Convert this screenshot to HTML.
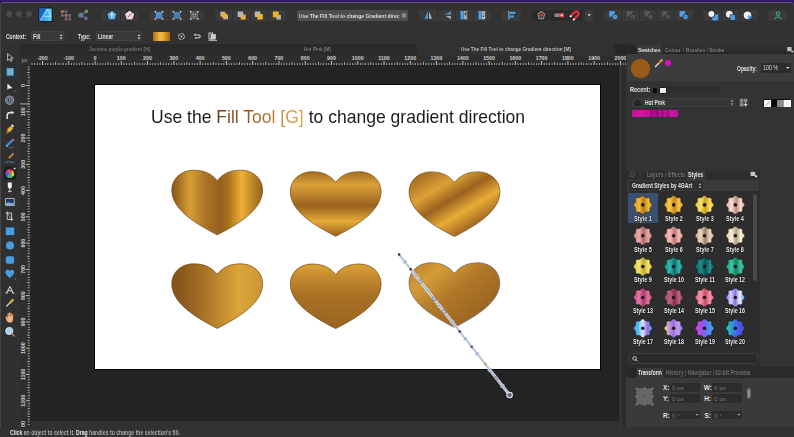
<!DOCTYPE html>
<html><head><meta charset="utf-8"><style>
*{margin:0;padding:0;box-sizing:border-box}
html,body{width:794px;height:437px;overflow:hidden;background:#2e2e2e;font-family:"Liberation Sans",sans-serif}
.a{position:absolute}
.t{position:absolute;white-space:nowrap;line-height:1}
.grp{position:absolute;top:10px;height:11px;background:#3b3b3b;border-radius:2px}
.b{font-weight:bold}
.t{text-shadow:0 0 0.7px rgba(0,0,0,0.9)}
</style></head><body>
<div class="a" style="left:0;top:0;width:794px;height:437px;background:#323232"></div>
<div class="a" style="left:0;top:0;width:794px;height:12px;background:#34186a"></div>
<div class="a" style="left:0;top:1.6px;width:794px;height:20px;background:#323232;border-radius:4px 4px 0 0;border-top:1px solid #5e5478;border-left:1.3px solid #464646"></div>
<div class="a" style="left:6.1000000000000005px;top:10.5px;width:6.4px;height:6.4px;border-radius:50%;background:#4c4c4c"></div>
<div class="a" style="left:15.8px;top:10.5px;width:6.4px;height:6.4px;border-radius:50%;background:#4c4c4c"></div>
<div class="a" style="left:25.5px;top:10.5px;width:6.4px;height:6.4px;border-radius:50%;background:#4c4c4c"></div>
<div class="a" style="left:0;top:12px;width:1.3px;height:425px;background:#464646"></div>
<div class="a" style="left:20px;top:43.6px;width:596px;height:11.1px;background:#2a2a2a"></div>
<div class="a" style="left:416.9px;top:43.6px;width:197.6px;height:11.1px;background:#313131"></div>
<div class="a" style="left:614.5px;top:43.6px;width:12.5px;height:11.1px;background:#272727"></div>
<div class="a" style="left:20px;top:54.8px;width:606px;height:10.2px;background:#2e2e2e"></div>
<div class="a" style="left:1.3px;top:43.6px;width:18.7px;height:384px;background:#303030"></div>
<div class="a" style="left:20px;top:65px;width:11px;height:362.8px;background:#2e2e2e"></div>
<div class="a" style="left:31px;top:65px;width:587.9px;height:355.6px;background:#232323"></div>
<div class="a" style="left:618.9px;top:65px;width:3.1px;height:362.8px;background:#333"></div>
<div class="a" style="left:622px;top:65px;width:3.7px;height:362.8px;background:#2c2c2c"></div>
<div class="a" style="left:94.8px;top:85.1px;width:505.5px;height:283.6px;background:#fff;box-shadow:0 0 0 0.9px #000"></div>
<div class="a" style="left:31px;top:420.6px;width:587.9px;height:7.2px;background:#313131"></div>
<div class="a" style="left:0;top:427.8px;width:794px;height:9.2px;background:#323232"></div>
<div class="a" style="left:625.7px;top:54.8px;width:168.3px;height:373px;background:#333"></div>
<svg class="a" style="left:38px;top:7px" width="15" height="15" viewBox="0 0 15 15" ><defs><linearGradient id="lg" x1="0" y1="0" x2="1" y2="0"><stop offset="0" stop-color="#2a90e0"/><stop offset="1" stop-color="#62d0f8"/></linearGradient></defs><rect x="0.3" y="0.6" width="14.4" height="14.4" rx="1.6" fill="#0e1620"/><rect x="1.3" y="1.6" width="12.4" height="12.4" rx="0.8" fill="url(#lg)"/><path d="M1.3 1.6 H8.6 L1.3 13.6Z" fill="#1e64b8"/><path d="M2 13.6 L9.2 2.2 M9.2 2.2 L13 9.4 M5.6 9.4 H13" stroke="#e6f6ff" stroke-width="0.6" fill="none" opacity="0.9"/></svg>
<svg class="a" style="left:60px;top:9px" width="12" height="13" viewBox="0 0 12 13" ><rect x="0.9" y="1.2" width="2.8" height="2.8" rx="0.4" fill="#b07a56"/><rect x="4.6" y="1.2" width="2.8" height="2.8" rx="0.4" fill="#6a6a86"/><rect x="0.9" y="4.9" width="2.8" height="2.8" rx="0.4" fill="#6a6a86"/><rect x="4.6" y="4.9" width="2.8" height="2.8" rx="0.4" fill="#b07a56"/><rect x="8.3" y="4.9" width="2.8" height="2.8" rx="0.4" fill="#6a6a86"/><rect x="4.6" y="8.6" width="2.8" height="2.8" rx="0.4" fill="#6a6a86"/><rect x="8.3" y="8.6" width="2.8" height="2.8" rx="0.4" fill="#8a5a56"/></svg>
<svg class="a" style="left:76px;top:9px" width="13" height="13" viewBox="0 0 13 13" ><path d="M4.9 6 L10.4 2.4 M4.9 6 L10 9.4" stroke="#5a6a7a" stroke-width="1.2"/><circle cx="4.9" cy="6" r="2.6" fill="#5a7f9c"/><circle cx="10.4" cy="2.4" r="1.9" fill="#6f8f5a"/><circle cx="10" cy="9.4" r="1.8" fill="#6a6a8e"/></svg>
<div class="a" style="left:102.2px;top:10px;width:36.0px;height:10.6px;background:#3a3a3a;border-radius:1.5px"></div><div class="a" style="left:119.90px;top:10px;width:0.6px;height:10.6px;background:#2f2f2f"></div>
<svg class="a" style="left:100px;top:6px" width="40" height="18" viewBox="0 0 40 18" ><circle cx="11.9" cy="9.3" r="5.2" fill="#1d2430"/><path d="M11.9,5.9 L15.3,8.4 L14.0,12.4 L9.8,12.4 L8.5,8.4Z" fill="#5aa7de" stroke="#5aa7de" stroke-width="2.2" stroke-linejoin="round"/><path d="M11.9 12 V7.6 M10.2 9.2 L11.9 7.3 L13.6 9.2" stroke="#fff" stroke-width="1" fill="none"/><circle cx="29.6" cy="9.3" r="5.2" fill="#1d2430"/><path d="M29.6,5.9 L33.0,8.4 L31.7,12.4 L27.5,12.4 L26.2,8.4Z" fill="#e8d8dc" stroke="#e8d8dc" stroke-width="2.2" stroke-linejoin="round"/><path d="M27.5 11.5 L31.8 7.2" stroke="#d8504a" stroke-width="1"/></svg>
<div class="a" style="left:150px;top:10px;width:54.0px;height:10.6px;background:#3a3a3a;border-radius:1.5px"></div><div class="a" style="left:167.70px;top:10px;width:0.6px;height:10.6px;background:#2f2f2f"></div><div class="a" style="left:185.70px;top:10px;width:0.6px;height:10.6px;background:#2f2f2f"></div>
<svg class="a" style="left:150px;top:6px" width="54" height="18" viewBox="0 0 54 18" ><rect x="5.7" y="6.000000000000001" width="6.6" height="6.6" fill="#4f8ec8"/><rect x="4.7" y="5.0" width="1.4" height="1.4" fill="#e8e8e8"/><rect x="4.7" y="12.2" width="1.4" height="1.4" fill="#e8e8e8"/><rect x="11.9" y="5.0" width="1.4" height="1.4" fill="#e8e8e8"/><rect x="11.9" y="12.2" width="1.4" height="1.4" fill="#e8e8e8"/><rect x="23.7" y="6.000000000000001" width="6.6" height="6.6" fill="#4a7fb0"/><rect x="22.7" y="5.0" width="1.4" height="1.4" fill="#e8e8e8"/><rect x="22.7" y="12.2" width="1.4" height="1.4" fill="#e8e8e8"/><rect x="29.9" y="5.0" width="1.4" height="1.4" fill="#e8e8e8"/><rect x="29.9" y="12.2" width="1.4" height="1.4" fill="#e8e8e8"/><rect x="41.0" y="6.000000000000001" width="6.6" height="6.6" fill="#555" stroke="#888" stroke-width="0.6"/><circle cx="43.099999999999994" cy="8.5" r="0.8" fill="#bbb"/><circle cx="45.5" cy="8.5" r="0.8" fill="#bbb"/><path d="M42.8 10.8 H45.8" stroke="#bbb" stroke-width="0.7"/><rect x="40.0" y="5.0" width="1.4" height="1.4" fill="#e8e8e8"/><rect x="40.0" y="12.2" width="1.4" height="1.4" fill="#e8e8e8"/><rect x="47.2" y="5.0" width="1.4" height="1.4" fill="#e8e8e8"/><rect x="47.2" y="12.2" width="1.4" height="1.4" fill="#e8e8e8"/></svg>
<div class="a" style="left:215px;top:10px;width:70.5px;height:10.6px;background:#3a3a3a;border-radius:1.5px"></div><div class="a" style="left:232.32px;top:10px;width:0.6px;height:10.6px;background:#2f2f2f"></div><div class="a" style="left:249.95px;top:10px;width:0.6px;height:10.6px;background:#2f2f2f"></div><div class="a" style="left:267.57px;top:10px;width:0.6px;height:10.6px;background:#2f2f2f"></div>
<svg class="a" style="left:214px;top:6px" width="72" height="18" viewBox="0 0 72 18" ><rect x="6.3999999999999995" y="5.7" width="4.6" height="4.6" fill="#b8b8b8"/><rect x="9.399999999999999" y="8.7" width="4.6" height="4.6" fill="#b8b8b8"/><rect x="7.6" y="6.9" width="5.2" height="5.2" fill="#f0b030" transform="rotate(45 10.2 9.5)"/><rect x="23.7" y="5.5" width="5.5" height="5.5" fill="#b8b8b8"/><path d="M29.2 8.5 h2.5 v5 h-5 v-2.5 h2.5z" fill="#f0b030"/><rect x="40.8" y="5.5" width="5.5" height="5.5" fill="#b8b8b8"/><rect x="43.3" y="8.0" width="5.5" height="5.5" fill="#f0b030"/><rect x="62.4" y="9.0" width="4.5" height="4.5" fill="#b8b8b8"/><rect x="58.9" y="5.5" width="5.8" height="5.8" fill="#f0b030"/></svg>
<div class="a" style="left:297.4px;top:10.1px;width:110.3px;height:10.7px;background:#4e4e4e;border-radius:2px"></div>
<div class="t" style="left:299.00px;top:12.62px;font-size:6.25px;color:#f0f0f0;font-weight:bold;transform:scaleX(0.805);transform-origin:0 0">Use The Fill Tool to change Gradient direc</div>
<div class="a" style="left:401.8px;top:13.2px;width:4.4px;height:4.4px;border-radius:50%;background:#8a8a8a"></div>
<div class="a" style="left:418.8px;top:10px;width:72.2px;height:10.6px;background:#3a3a3a;border-radius:1.5px"></div><div class="a" style="left:436.55px;top:10px;width:0.6px;height:10.6px;background:#2f2f2f"></div><div class="a" style="left:454.60px;top:10px;width:0.6px;height:10.6px;background:#2f2f2f"></div><div class="a" style="left:472.65px;top:10px;width:0.6px;height:10.6px;background:#2f2f2f"></div>
<svg class="a" style="left:418px;top:6px" width="74" height="18" viewBox="0 0 74 18" ><path d="M6.7 12.8 L9.9 5.2 V12.8Z" fill="#4fa0e6"/><path d="M11 5.2 L14.2 12.8 H11Z" fill="#aaa"/><path d="M25 9.3 L33 5.4 V8.6 H27.5Z" fill="#4fa0e6"/><path d="M27.5 10 H33 V13.2Z" fill="#aaa"/><rect x="42.5" y="5" width="3.2" height="8.4" fill="#4fa0e6"/><rect x="46" y="5" width="3.2" height="8.4" fill="#aaa"/><path d="M46.2 7.6 q1.4 -1.6 2.8 0" stroke="#222" stroke-width="0.8" fill="none"/><circle cx="47.6" cy="8.8" r="0.7" fill="#111"/><rect x="60.5" y="5" width="3.2" height="8.4" fill="#4fa0e6"/><rect x="64" y="5" width="3.2" height="8.4" fill="#aaa"/><path d="M64.2 11 q1.4 1.6 2.8 0" stroke="#fff" stroke-width="0.8" fill="none"/><circle cx="65.4" cy="10.4" r="0.6" fill="#111"/></svg>
<div class="a" style="left:502px;top:10px;width:18.6px;height:10.6px;background:#3a3a3a;border-radius:1.5px"></div>
<svg class="a" style="left:502px;top:6px" width="19" height="18" viewBox="0 0 19 18" ><rect x="6.2" y="5" width="1.3" height="8.4" fill="#7ab"/><rect x="7.8" y="5.8" width="5.5" height="2.2" fill="#4fa0e6"/><rect x="7.8" y="9.4" width="4" height="2.2" fill="#4fa0e6"/></svg>
<div class="a" style="left:532px;top:10px;width:51.3px;height:10.6px;background:#2a2a2a;border-radius:1.5px"></div><div class="a" style="left:548.80px;top:10px;width:0.6px;height:10.6px;background:#2f2f2f"></div><div class="a" style="left:565.90px;top:10px;width:0.6px;height:10.6px;background:#2f2f2f"></div>
<div class="a" style="left:585.2px;top:10px;width:7.4px;height:10.6px;background:#3c3c3c;border-radius:1.5px"></div>
<svg class="a" style="left:532px;top:6px" width="62" height="18" viewBox="0 0 62 18" ><path d="M6 8 L9.3 5.5 L12.6 8 L11.4 12.5 L7.2 12.5 Z" fill="none" stroke="#8a8a8a" stroke-width="1.3"/><circle cx="9.3" cy="9.2" r="1.6" fill="#d03a3a"/><rect x="22.5" y="7.5" width="9.5" height="3.6" rx="0.6" fill="#8a8a8a"/><rect x="27.2" y="7.2" width="5" height="4.2" rx="0.6" fill="#e0383a"/><circle cx="29.7" cy="9.3" r="1" fill="#fff"/><path d="M38.5 12 L41.3 9.2 A2.2 2.2 0 0 1 44.4 12.3 L41.6 15.1" stroke="none" fill="none"/><path d="M38.6 11.6 L42.6 7.6 A2.3 2.3 0 0 1 45.9 10.9 L41.9 14.9" stroke="#e0303a" stroke-width="2.2" fill="none" transform="translate(0 -1.5)"/><rect x="37.7" y="9.3" width="1.8" height="1.8" fill="#fff" transform="rotate(45 38.6 10.2)"/><rect x="41" y="12.6" width="1.8" height="1.8" fill="#fff" transform="rotate(45 41.9 13.5)"/><path d="M55.6 8.3 H58.6 L57.1 10.2Z" fill="#eee"/></svg>
<div class="a" style="left:603.5px;top:10px;width:89.1px;height:10.6px;background:#3a3a3a;border-radius:1.5px"></div><div class="a" style="left:621.02px;top:10px;width:0.6px;height:10.6px;background:#2f2f2f"></div><div class="a" style="left:638.84px;top:10px;width:0.6px;height:10.6px;background:#2f2f2f"></div><div class="a" style="left:656.66px;top:10px;width:0.6px;height:10.6px;background:#2f2f2f"></div><div class="a" style="left:674.48px;top:10px;width:0.6px;height:10.6px;background:#2f2f2f"></div>
<svg class="a" style="left:603px;top:6px" width="90" height="18" viewBox="0 0 90 18" ><rect x="6.199999999999999" y="5.1000000000000005" width="5.6" height="5.6" fill="#4fa0e6"/><circle cx="12.1" cy="11.0" r="2.8" fill="#4fa0e6" stroke="#2a2a2a" stroke-width="0.8"/><circle cx="12.1" cy="11.0" r="1" fill="#3a80c8"/><rect x="23.8" y="5.1000000000000005" width="5.6" height="5.6" fill="#575757"/><circle cx="29.7" cy="11.0" r="2.8" fill="#575757" stroke="#2a2a2a" stroke-width="0.8"/><circle cx="29.7" cy="11.0" r="1" fill="#444"/><rect x="41.7" y="5.1000000000000005" width="5.6" height="5.6" fill="#575757"/><circle cx="47.6" cy="11.0" r="2.8" fill="#575757" stroke="#2a2a2a" stroke-width="0.8"/><circle cx="47.6" cy="11.0" r="1" fill="#444"/><rect x="59" y="5.1000000000000005" width="5.6" height="5.6" fill="#575757"/><circle cx="64.9" cy="11.0" r="2.8" fill="#575757" stroke="#2a2a2a" stroke-width="0.8"/><circle cx="64.9" cy="11.0" r="1" fill="#444"/><rect x="76.6" y="5.1000000000000005" width="5.6" height="5.6" fill="#4fa0e6"/><circle cx="82.5" cy="11.0" r="2.8" fill="#4fa0e6" stroke="#2a2a2a" stroke-width="0.8"/><circle cx="82.5" cy="11.0" r="1" fill="#3a80c8"/></svg>
<div class="a" style="left:703px;top:10px;width:54.4px;height:10.6px;background:#3a3a3a;border-radius:1.5px"></div><div class="a" style="left:720.83px;top:10px;width:0.6px;height:10.6px;background:#2f2f2f"></div><div class="a" style="left:738.97px;top:10px;width:0.6px;height:10.6px;background:#2f2f2f"></div>
<svg class="a" style="left:703px;top:6px" width="55" height="18" viewBox="0 0 55 18" ><rect x="9.2" y="8.4" width="6" height="6" fill="#4fa0e6"/><circle cx="8.4" cy="8" r="3.6" fill="#f2f2f2" stroke="#111" stroke-width="0.8"/><circle cx="26.3" cy="8.3" r="4" fill="#f2f2f2" stroke="#111" stroke-width="0.8"/><rect x="27" y="8.8" width="5.6" height="5.5" fill="#4fa0e6" stroke="#1a1a1a" stroke-width="0.6"/><circle cx="44.5" cy="9.3" r="4.3" fill="#f2f2f2" stroke="#111" stroke-width="0.8"/><path d="M44.8 9.6 H48.8 A4.3 4.3 0 0 1 44.8 13.6Z" fill="#4fa0e6"/></svg>
<div class="a" style="left:768px;top:10px;width:19.3px;height:10.6px;background:#3a3a3a;border-radius:1.5px"></div>
<svg class="a" style="left:768px;top:6px" width="20" height="18" viewBox="0 0 20 18" ><circle cx="10" cy="7.6" r="1.7" fill="none" stroke="#3fa06a" stroke-width="1.3"/><path d="M6.3 13.2 Q10 8.6 13.7 13.2" stroke="#3fa06a" stroke-width="1.3" fill="none"/></svg>
<div class="t" style="left:5.80px;top:34.16px;font-size:6.83px;color:#eeeeee;font-weight:bold;transform:scaleX(0.729);transform-origin:0 0">Context:</div>
<div class="a" style="left:31px;top:31px;width:33px;height:10.4px;background:#393939;border:0.5px solid #424242;border-radius:1.5px"></div>
<div class="t" style="left:33.00px;top:34.16px;font-size:6.83px;color:#eeeeee;font-weight:bold;transform:scaleX(0.750);transform-origin:0 0">Fill</div>
<svg class="a" style="left:58px;top:32px" width="6" height="10"><path d="M1.6 4 L3 2.2 L4.4 4Z M1.6 5.6 L3 7.4 L4.4 5.6Z" fill="#ddd"/></svg>
<div class="a" style="left:69.5px;top:30px;width:0.8px;height:13px;background:#2c2c2c"></div>
<div class="t" style="left:78.30px;top:34.16px;font-size:6.83px;color:#eeeeee;font-weight:bold;transform:scaleX(0.717);transform-origin:0 0">Type:</div>
<div class="a" style="left:95.7px;top:31px;width:46.3px;height:10.4px;background:#393939;border:0.5px solid #424242;border-radius:1.5px"></div>
<div class="t" style="left:97.80px;top:34.16px;font-size:6.83px;color:#eeeeee;font-weight:bold;transform:scaleX(0.741);transform-origin:0 0">Linear</div>
<svg class="a" style="left:136px;top:31.5px" width="6" height="10"><path d="M1.6 4 L3 2.2 L4.4 4Z M1.6 5.6 L3 7.4 L4.4 5.6Z" fill="#ddd"/></svg>
<div class="a" style="left:152.8px;top:31.7px;width:17px;height:9px;background:linear-gradient(90deg,#a86a1a,#e8b03a 35%,#f0b840 50%,#d0922a 75%,#a06418)"></div>
<svg class="a" style="left:174px;top:30px" width="48" height="14"><circle cx="7.4" cy="6.5" r="3" fill="none" stroke="#ddd" stroke-width="0.9" stroke-dasharray="3.5 1.2"/><circle cx="7.4" cy="6.5" r="0.9" fill="#ddd"/><path d="M20 5 H26 M20 5 L21.5 3.8 M26 5 V7.8 H21 M21 7.8 L22.2 9" stroke="#ddd" stroke-width="0.9" fill="none"/><rect x="35" y="3" width="3.6" height="6" fill="none" stroke="#ddd" stroke-width="0.9"/><rect x="37" y="4.5" width="4.5" height="4.5" fill="#ccc" stroke="#ddd" stroke-width="0.6"/><path d="M34.5 10.3 H43" stroke="#ddd" stroke-width="0.9"/></svg>
<div class="a" style="left:627px;top:43.6px;width:167px;height:10.7px;background:linear-gradient(#323232,#2a2a2a 80%,#262626)"></div>
<div class="a" style="left:628px;top:44.5px;width:8px;height:9.6px;background:#262626"></div>
<div class="a" style="left:636.6px;top:44.5px;width:25.7px;height:9.6px;background:#3a3a3a"></div>
<div class="t" style="left:638.20px;top:46.62px;font-size:6.25px;color:#f0f0f0;font-weight:bold;transform:scaleX(0.780);transform-origin:0 0">Swatches</div>
<div class="t" style="left:665.30px;top:46.62px;font-size:6.25px;color:#8a8a8a;font-weight:bold;transform:scaleX(0.780);transform-origin:0 0">Colour</div>
<div class="a" style="left:683.1px;top:46.8px;width:0.5px;height:5.4px;background:#4c4c4c"></div>
<div class="t" style="left:685.50px;top:46.62px;font-size:6.25px;color:#8a8a8a;font-weight:bold;transform:scaleX(0.780);transform-origin:0 0">Brushes</div>
<div class="a" style="left:706.7px;top:46.8px;width:0.5px;height:5.4px;background:#4c4c4c"></div>
<div class="t" style="left:709.00px;top:46.62px;font-size:6.25px;color:#8a8a8a;font-weight:bold;transform:scaleX(0.797);transform-origin:0 0">Stroke</div>
<svg class="a" style="left:784px;top:45px" width="10" height="9"><rect x="3.2" y="2" width="4.4" height="4.2" fill="#bdbdbd"/><rect x="7.4" y="5.8" width="2" height="1.6" fill="#ddd"/></svg>
<div class="a" style="left:626.5px;top:54.3px;width:167.5px;height:26.8px;background:#3c3c3c"></div>
<div class="a" style="left:631.1px;top:58.7px;width:19px;height:19px;border-radius:50%;background:#9a5c18;box-shadow:0 0 0 0.5px #6a4418"></div>
<svg class="a" style="left:654px;top:58px" width="10" height="10"><path d="M1.5 8.5 L6 4" stroke="#e8e8e8" stroke-width="1.4" stroke-linecap="round"/><path d="M5.4 4.6 L7.8 2.2" stroke="#c89a40" stroke-width="2.4" stroke-linecap="round"/><path d="M5 3.6 L6.8 5.4" stroke="#222" stroke-width="0.8"/></svg>
<div class="a" style="left:664.8px;top:59.7px;width:6px;height:6px;border-radius:50%;background:#d812c4"></div>
<div class="t" style="left:736.70px;top:65.50px;font-size:6.40px;color:#eeeeee;font-weight:bold;transform:scaleX(0.782);transform-origin:0 0">Opacity:</div>
<div class="a" style="left:760.8px;top:62.7px;width:30px;height:9.9px;background:#2c2c2c;border-radius:1.5px"></div>
<div class="t" style="left:762.80px;top:65.27px;font-size:6.69px;color:#e8e8e8;font-weight:normal;transform:scaleX(0.791);transform-origin:0 0">100 %</div>
<svg class="a" style="left:785px;top:64px" width="6" height="8"><path d="M1 3 H4.4 L2.7 5Z" fill="#e0e0e0"/></svg>
<div class="t" style="left:629.80px;top:87.40px;font-size:6.40px;color:#eeeeee;font-weight:bold;transform:scaleX(0.870);transform-origin:0 0">Recent:</div>
<div class="a" style="left:653.2px;top:87.6px;width:4.3px;height:5.6px;background:#0a0a0a"></div>
<div class="a" style="left:658.6px;top:86.6px;width:8.8px;height:7.4px;background:#f2f2f2;border:1px solid #1a1a1a;border-radius:1px"></div>
<div class="a" style="left:668px;top:86px;width:51px;height:8px;background:#2f2f2f"></div>
<div class="a" style="left:632px;top:97.6px;width:103.7px;height:9.6px;background:#363636;border:0.5px solid #3e3e3e;border-radius:1.5px"></div>
<svg class="a" style="left:634px;top:98px" width="8" height="9"><path d="M3.8 2 L6.6 7 H1Z" fill="none" stroke="#111" stroke-width="0.9"/></svg>
<div class="t" style="left:644.80px;top:99.60px;font-size:6.40px;color:#eeeeee;font-weight:bold;transform:scaleX(0.771);transform-origin:0 0">Hot Pink</div>
<svg class="a" style="left:729px;top:98px" width="6" height="9"><path d="M1.6 3.6 L3 2 L4.4 3.6Z M1.6 5.4 L3 7 L4.4 5.4Z" fill="#ccc"/></svg>
<svg class="a" style="left:739px;top:97.5px" width="10" height="10"><rect x="0.8" y="0.8" width="3.6" height="3.6" fill="#8a8a8a"/><rect x="4.8" y="0.8" width="3.6" height="3.6" fill="#8a8a8a"/><rect x="0.8" y="4.8" width="3.6" height="3.6" fill="#8a8a8a"/><path d="M6.6 4.8 V8.6 M4.7 6.7 H8.5" stroke="#ddd" stroke-width="1"/></svg>
<div class="a" style="left:763.4px;top:99.1px;width:28px;height:8.1px;background:#111;border-radius:1.5px"></div>
<svg class="a" style="left:764px;top:99.6px" width="27" height="7.2"><rect x="0" y="0" width="7.2" height="7.2" fill="#f4f4f4"/><path d="M1.5 5.7 L5.7 1.5" stroke="#e04060" stroke-width="0.6"/><rect x="7.4" y="0" width="5.4" height="7.2" fill="#0a0a0a"/><rect x="13" y="0" width="6.4" height="7.2" fill="#8a8a8a"/><rect x="19.5" y="0" width="7.5" height="7.2" fill="#f8f8f8"/></svg>
<div class="a" style="left:632px;top:110.3px;width:45.5px;height:6.8px;background:linear-gradient(90deg,#c8109c 0,#d414a4 20%,#c0109a 38%,#9a0880 42%,#b80c96 48%,#8a0872 56%,#c010a0 60%,#a00a84 66%,#c814a2 72%,#980880 78%,#cc16a6 84%,#c010a0 100%)"></div>
<div class="a" style="left:626.4px;top:170.6px;width:133.6px;height:196px;background:#2d2d2d"></div>
<svg class="a" style="left:628px;top:170px" width="14" height="10"><circle cx="4.3" cy="4.4" r="2.4" fill="none" stroke="#555" stroke-width="1"/><circle cx="4.3" cy="4.4" r="1" fill="#444"/><path d="M12.3 2.2 V6.8" stroke="#444" stroke-width="1.6" stroke-dasharray="1 0.6"/></svg>
<div class="t" style="left:647.00px;top:172.20px;font-size:6.40px;color:#7c7c7c;font-weight:bold;transform:scaleX(0.786);transform-origin:0 0">Layers</div>
<div class="a" style="left:664.9px;top:172.6px;width:0.5px;height:5.4px;background:#4c4c4c"></div>
<div class="t" style="left:667.50px;top:172.20px;font-size:6.40px;color:#7c7c7c;font-weight:bold;transform:scaleX(0.807);transform-origin:0 0">Effects</div>
<div class="a" style="left:687px;top:170.6px;width:17.6px;height:9.6px;background:#3a3a3a"></div>
<div class="t" style="left:688.00px;top:172.20px;font-size:6.40px;color:#f2f2f2;font-weight:bold;transform:scaleX(0.807);transform-origin:0 0">Styles</div>
<svg class="a" style="left:750px;top:171px" width="10" height="9"><rect x="0.6" y="0.8" width="4.6" height="4.2" fill="#c4c4c4"/><rect x="5" y="4.4" width="2.2" height="1.8" fill="#e8e8e8"/></svg>
<div class="a" style="left:627.4px;top:180.3px;width:131.8px;height:10.3px;background:#3a3a3a"></div>
<div class="a" style="left:628.8px;top:181.2px;width:74.4px;height:9px;background:#2f2f2f;border-radius:1.5px"></div>
<div class="t" style="left:632.20px;top:183.19px;font-size:6.54px;color:#eeeeee;font-weight:bold;transform:scaleX(0.778);transform-origin:0 0">Gradient Styles by 4GArt</div>
<svg class="a" style="left:697px;top:181px" width="6" height="10"><path d="M1.6 3.8 L3 2.2 L4.4 3.8Z M1.6 5.6 L3 7.2 L4.4 5.6Z" fill="#ccc"/></svg>
<div class="a" style="left:627.8px;top:192.6px;width:30.2px;height:30px;background:#3b5070"></div>
<div class="a" style="left:753.4px;top:194px;width:3.6px;height:87px;background:#4a4a4a;border-radius:2px"></div>
<svg class="a" style="left:626px;top:190px" width="134" height="160"><defs><linearGradient id="st0" gradientUnits="userSpaceOnUse" x1="7.8" y1="0" x2="25.8" y2="0"><stop offset="0" stop-color="#d69a28"/><stop offset="0.3" stop-color="#f2bc3a"/><stop offset="0.55" stop-color="#b47818"/><stop offset="0.8" stop-color="#f2bc3a"/><stop offset="1" stop-color="#d69a28"/></linearGradient><linearGradient id="st1" gradientUnits="userSpaceOnUse" x1="38.6" y1="0" x2="56.6" y2="0"><stop offset="0" stop-color="#e2a82a"/><stop offset="0.3" stop-color="#f8c848"/><stop offset="0.55" stop-color="#c48820"/><stop offset="0.8" stop-color="#f8c848"/><stop offset="1" stop-color="#e2a82a"/></linearGradient><linearGradient id="st2" gradientUnits="userSpaceOnUse" x1="69.5" y1="0" x2="87.5" y2="0"><stop offset="0" stop-color="#e6c43a"/><stop offset="0.3" stop-color="#f8e068"/><stop offset="0.55" stop-color="#c8a020"/><stop offset="0.8" stop-color="#f8e068"/><stop offset="1" stop-color="#e6c43a"/></linearGradient><linearGradient id="st3" gradientUnits="userSpaceOnUse" x1="100.3" y1="0" x2="118.3" y2="0"><stop offset="0" stop-color="#dcaaa2"/><stop offset="0.3" stop-color="#f8dcd4"/><stop offset="0.55" stop-color="#c08880"/><stop offset="0.8" stop-color="#f8dcd4"/><stop offset="1" stop-color="#dcaaa2"/></linearGradient><linearGradient id="st4" gradientUnits="userSpaceOnUse" x1="7.8" y1="0" x2="25.8" y2="0"><stop offset="0" stop-color="#cc8484"/><stop offset="0.3" stop-color="#e8acaa"/><stop offset="0.55" stop-color="#b06868"/><stop offset="0.8" stop-color="#e8acaa"/><stop offset="1" stop-color="#cc8484"/></linearGradient><linearGradient id="st5" gradientUnits="userSpaceOnUse" x1="38.6" y1="0" x2="56.6" y2="0"><stop offset="0" stop-color="#da9896"/><stop offset="0.3" stop-color="#f2bcb6"/><stop offset="0.55" stop-color="#c07878"/><stop offset="0.8" stop-color="#f2bcb6"/><stop offset="1" stop-color="#da9896"/></linearGradient><linearGradient id="st6" gradientUnits="userSpaceOnUse" x1="69.5" y1="0" x2="87.5" y2="0"><stop offset="0" stop-color="#cca88e"/><stop offset="0.3" stop-color="#eed8c0"/><stop offset="0.55" stop-color="#a08068"/><stop offset="0.8" stop-color="#eed8c0"/><stop offset="1" stop-color="#cca88e"/></linearGradient><linearGradient id="st7" gradientUnits="userSpaceOnUse" x1="100.3" y1="0" x2="118.3" y2="0"><stop offset="0" stop-color="#dccca4"/><stop offset="0.3" stop-color="#f8f0d8"/><stop offset="0.55" stop-color="#b0a078"/><stop offset="0.8" stop-color="#f8f0d8"/><stop offset="1" stop-color="#dccca4"/></linearGradient><linearGradient id="st8" gradientUnits="userSpaceOnUse" x1="7.8" y1="0" x2="25.8" y2="0"><stop offset="0" stop-color="#dec448"/><stop offset="0.3" stop-color="#f4e478"/><stop offset="0.55" stop-color="#c4a830"/><stop offset="0.8" stop-color="#f4e478"/><stop offset="1" stop-color="#dec448"/></linearGradient><linearGradient id="st9" gradientUnits="userSpaceOnUse" x1="38.6" y1="0" x2="56.6" y2="0"><stop offset="0" stop-color="#1c9090"/><stop offset="0.3" stop-color="#34b4aa"/><stop offset="0.55" stop-color="#0e7070"/><stop offset="0.8" stop-color="#34b4aa"/><stop offset="1" stop-color="#1c9090"/></linearGradient><linearGradient id="st10" gradientUnits="userSpaceOnUse" x1="69.5" y1="0" x2="87.5" y2="0"><stop offset="0" stop-color="#0e6a6a"/><stop offset="0.3" stop-color="#1e8c88"/><stop offset="0.55" stop-color="#0a5656"/><stop offset="0.8" stop-color="#1e8c88"/><stop offset="1" stop-color="#0e6a6a"/></linearGradient><linearGradient id="st11" gradientUnits="userSpaceOnUse" x1="100.3" y1="0" x2="118.3" y2="0"><stop offset="0" stop-color="#1ea080"/><stop offset="0.3" stop-color="#44c4a2"/><stop offset="0.55" stop-color="#0e8060"/><stop offset="0.8" stop-color="#44c4a2"/><stop offset="1" stop-color="#1ea080"/></linearGradient><linearGradient id="st12" gradientUnits="userSpaceOnUse" x1="7.8" y1="0" x2="25.8" y2="0"><stop offset="0" stop-color="#c6507e"/><stop offset="0.3" stop-color="#e274a2"/><stop offset="0.55" stop-color="#a83c6a"/><stop offset="0.8" stop-color="#e274a2"/><stop offset="1" stop-color="#c6507e"/></linearGradient><linearGradient id="st13" gradientUnits="userSpaceOnUse" x1="38.6" y1="0" x2="56.6" y2="0"><stop offset="0" stop-color="#9e4666"/><stop offset="0.3" stop-color="#bc6282"/><stop offset="0.55" stop-color="#843050"/><stop offset="0.8" stop-color="#bc6282"/><stop offset="1" stop-color="#9e4666"/></linearGradient><linearGradient id="st14" gradientUnits="userSpaceOnUse" x1="69.5" y1="0" x2="87.5" y2="0"><stop offset="0" stop-color="#de6e88"/><stop offset="0.3" stop-color="#f294aa"/><stop offset="0.55" stop-color="#c84a6a"/><stop offset="0.8" stop-color="#f294aa"/><stop offset="1" stop-color="#de6e88"/></linearGradient><linearGradient id="st15" gradientUnits="userSpaceOnUse" x1="100.3" y1="0" x2="118.3" y2="0"><stop offset="0.00" stop-color="#8070f0"/><stop offset="0.25" stop-color="#d8d0ff"/><stop offset="0.50" stop-color="#8a70e8"/><stop offset="0.75" stop-color="#f0f0ff"/><stop offset="1.00" stop-color="#5a98f0"/></linearGradient><linearGradient id="st16" gradientUnits="userSpaceOnUse" x1="7.8" y1="0" x2="25.8" y2="0"><stop offset="0.00" stop-color="#7090f0"/><stop offset="0.25" stop-color="#40c8f0"/><stop offset="0.50" stop-color="#e8e0ff"/><stop offset="0.75" stop-color="#9070e8"/><stop offset="1.00" stop-color="#60a8f0"/></linearGradient><linearGradient id="st17" gradientUnits="userSpaceOnUse" x1="38.6" y1="0" x2="56.6" y2="0"><stop offset="0.00" stop-color="#f8e870"/><stop offset="0.25" stop-color="#c090e0"/><stop offset="0.50" stop-color="#9a70e0"/><stop offset="0.75" stop-color="#c8a0f0"/><stop offset="1.00" stop-color="#8a68d8"/></linearGradient><linearGradient id="st18" gradientUnits="userSpaceOnUse" x1="69.5" y1="0" x2="87.5" y2="0"><stop offset="0.00" stop-color="#d040d8"/><stop offset="0.25" stop-color="#b050e8"/><stop offset="0.50" stop-color="#8060f0"/><stop offset="0.75" stop-color="#4890f0"/><stop offset="1.00" stop-color="#40a8f0"/></linearGradient><linearGradient id="st19" gradientUnits="userSpaceOnUse" x1="100.3" y1="0" x2="118.3" y2="0"><stop offset="0.00" stop-color="#20d0b8"/><stop offset="0.25" stop-color="#30a0d0"/><stop offset="0.50" stop-color="#4070e8"/><stop offset="0.75" stop-color="#5050e8"/><stop offset="1.00" stop-color="#3a60d0"/></linearGradient></defs><path d="M16.80,5.60 L17.16,5.61 L17.53,5.66 L17.88,5.77 L18.21,6.01 L18.49,6.42 L18.74,6.83 L19.00,7.09 L19.28,7.26 L19.57,7.39 L19.86,7.51 L20.15,7.63 L20.45,7.74 L20.76,7.82 L21.14,7.82 L21.61,7.71 L22.09,7.62 L22.49,7.68 L22.82,7.85 L23.11,8.08 L23.38,8.32 L23.62,8.59 L23.85,8.88 L24.02,9.21 L24.08,9.61 L23.99,10.09 L23.88,10.56 L23.88,10.94 L23.96,11.25 L24.07,11.55 L24.19,11.84 L24.31,12.13 L24.44,12.42 L24.61,12.70 L24.87,12.96 L25.28,13.21 L25.69,13.49 L25.93,13.82 L26.04,14.17 L26.09,14.54 L26.10,14.90 L26.09,15.26 L26.04,15.63 L25.93,15.98 L25.69,16.31 L25.28,16.59 L24.87,16.84 L24.61,17.10 L24.44,17.38 L24.31,17.67 L24.19,17.96 L24.07,18.25 L23.96,18.55 L23.88,18.86 L23.88,19.24 L23.99,19.71 L24.08,20.19 L24.02,20.59 L23.85,20.92 L23.62,21.21 L23.38,21.48 L23.11,21.72 L22.82,21.95 L22.49,22.12 L22.09,22.18 L21.61,22.09 L21.14,21.98 L20.76,21.98 L20.45,22.06 L20.15,22.17 L19.86,22.29 L19.57,22.41 L19.28,22.54 L19.00,22.71 L18.74,22.97 L18.49,23.38 L18.21,23.79 L17.88,24.03 L17.53,24.14 L17.16,24.19 L16.80,24.20 L16.44,24.19 L16.07,24.14 L15.72,24.03 L15.39,23.79 L15.11,23.38 L14.86,22.97 L14.60,22.71 L14.32,22.54 L14.03,22.41 L13.74,22.29 L13.45,22.17 L13.15,22.06 L12.84,21.98 L12.46,21.98 L11.99,22.09 L11.51,22.18 L11.11,22.12 L10.78,21.95 L10.49,21.72 L10.22,21.48 L9.98,21.21 L9.75,20.92 L9.58,20.59 L9.52,20.19 L9.61,19.71 L9.72,19.24 L9.72,18.86 L9.64,18.55 L9.53,18.25 L9.41,17.96 L9.29,17.67 L9.16,17.38 L8.99,17.10 L8.73,16.84 L8.32,16.59 L7.91,16.31 L7.67,15.98 L7.56,15.63 L7.51,15.26 L7.50,14.90 L7.51,14.54 L7.56,14.17 L7.67,13.82 L7.91,13.49 L8.32,13.21 L8.73,12.96 L8.99,12.70 L9.16,12.42 L9.29,12.13 L9.41,11.84 L9.53,11.55 L9.64,11.25 L9.72,10.94 L9.72,10.56 L9.61,10.09 L9.52,9.61 L9.58,9.21 L9.75,8.88 L9.98,8.59 L10.22,8.32 L10.49,8.08 L10.78,7.85 L11.11,7.68 L11.51,7.62 L11.99,7.71 L12.46,7.82 L12.84,7.82 L13.15,7.74 L13.45,7.63 L13.74,7.51 L14.03,7.39 L14.32,7.26 L14.60,7.09 L14.86,6.83 L15.11,6.42 L15.39,6.01 L15.72,5.77 L16.07,5.66 L16.44,5.61Z" fill="url(#st0)" stroke="#141414" stroke-width="0.6" stroke-opacity="0.8"/><circle cx="16.80" cy="14.90" r="1.8" fill="#1c1c1c"/><path d="M47.65,5.60 L48.01,5.61 L48.38,5.66 L48.73,5.77 L49.06,6.01 L49.34,6.42 L49.59,6.83 L49.85,7.09 L50.13,7.26 L50.42,7.39 L50.71,7.51 L51.00,7.63 L51.30,7.74 L51.61,7.82 L51.99,7.82 L52.46,7.71 L52.94,7.62 L53.34,7.68 L53.67,7.85 L53.96,8.08 L54.23,8.32 L54.47,8.59 L54.70,8.88 L54.87,9.21 L54.93,9.61 L54.84,10.09 L54.73,10.56 L54.73,10.94 L54.81,11.25 L54.92,11.55 L55.04,11.84 L55.16,12.13 L55.29,12.42 L55.46,12.70 L55.72,12.96 L56.13,13.21 L56.54,13.49 L56.78,13.82 L56.89,14.17 L56.94,14.54 L56.95,14.90 L56.94,15.26 L56.89,15.63 L56.78,15.98 L56.54,16.31 L56.13,16.59 L55.72,16.84 L55.46,17.10 L55.29,17.38 L55.16,17.67 L55.04,17.96 L54.92,18.25 L54.81,18.55 L54.73,18.86 L54.73,19.24 L54.84,19.71 L54.93,20.19 L54.87,20.59 L54.70,20.92 L54.47,21.21 L54.23,21.48 L53.96,21.72 L53.67,21.95 L53.34,22.12 L52.94,22.18 L52.46,22.09 L51.99,21.98 L51.61,21.98 L51.30,22.06 L51.00,22.17 L50.71,22.29 L50.42,22.41 L50.13,22.54 L49.85,22.71 L49.59,22.97 L49.34,23.38 L49.06,23.79 L48.73,24.03 L48.38,24.14 L48.01,24.19 L47.65,24.20 L47.29,24.19 L46.92,24.14 L46.57,24.03 L46.24,23.79 L45.96,23.38 L45.71,22.97 L45.45,22.71 L45.17,22.54 L44.88,22.41 L44.59,22.29 L44.30,22.17 L44.00,22.06 L43.69,21.98 L43.31,21.98 L42.84,22.09 L42.36,22.18 L41.96,22.12 L41.63,21.95 L41.34,21.72 L41.07,21.48 L40.83,21.21 L40.60,20.92 L40.43,20.59 L40.37,20.19 L40.46,19.71 L40.57,19.24 L40.57,18.86 L40.49,18.55 L40.38,18.25 L40.26,17.96 L40.14,17.67 L40.01,17.38 L39.84,17.10 L39.58,16.84 L39.17,16.59 L38.76,16.31 L38.52,15.98 L38.41,15.63 L38.36,15.26 L38.35,14.90 L38.36,14.54 L38.41,14.17 L38.52,13.82 L38.76,13.49 L39.17,13.21 L39.58,12.96 L39.84,12.70 L40.01,12.42 L40.14,12.13 L40.26,11.84 L40.38,11.55 L40.49,11.25 L40.57,10.94 L40.57,10.56 L40.46,10.09 L40.37,9.61 L40.43,9.21 L40.60,8.88 L40.83,8.59 L41.07,8.32 L41.34,8.08 L41.63,7.85 L41.96,7.68 L42.36,7.62 L42.84,7.71 L43.31,7.82 L43.69,7.82 L44.00,7.74 L44.30,7.63 L44.59,7.51 L44.88,7.39 L45.17,7.26 L45.45,7.09 L45.71,6.83 L45.96,6.42 L46.24,6.01 L46.57,5.77 L46.92,5.66 L47.29,5.61Z" fill="url(#st1)" stroke="#141414" stroke-width="0.6" stroke-opacity="0.8"/><circle cx="47.65" cy="14.90" r="1.8" fill="#1c1c1c"/><path d="M78.50,5.60 L78.86,5.61 L79.23,5.66 L79.58,5.77 L79.91,6.01 L80.19,6.42 L80.44,6.83 L80.70,7.09 L80.98,7.26 L81.27,7.39 L81.56,7.51 L81.85,7.63 L82.15,7.74 L82.46,7.82 L82.84,7.82 L83.31,7.71 L83.79,7.62 L84.19,7.68 L84.52,7.85 L84.81,8.08 L85.08,8.32 L85.32,8.59 L85.55,8.88 L85.72,9.21 L85.78,9.61 L85.69,10.09 L85.58,10.56 L85.58,10.94 L85.66,11.25 L85.77,11.55 L85.89,11.84 L86.01,12.13 L86.14,12.42 L86.31,12.70 L86.57,12.96 L86.98,13.21 L87.39,13.49 L87.63,13.82 L87.74,14.17 L87.79,14.54 L87.80,14.90 L87.79,15.26 L87.74,15.63 L87.63,15.98 L87.39,16.31 L86.98,16.59 L86.57,16.84 L86.31,17.10 L86.14,17.38 L86.01,17.67 L85.89,17.96 L85.77,18.25 L85.66,18.55 L85.58,18.86 L85.58,19.24 L85.69,19.71 L85.78,20.19 L85.72,20.59 L85.55,20.92 L85.32,21.21 L85.08,21.48 L84.81,21.72 L84.52,21.95 L84.19,22.12 L83.79,22.18 L83.31,22.09 L82.84,21.98 L82.46,21.98 L82.15,22.06 L81.85,22.17 L81.56,22.29 L81.27,22.41 L80.98,22.54 L80.70,22.71 L80.44,22.97 L80.19,23.38 L79.91,23.79 L79.58,24.03 L79.23,24.14 L78.86,24.19 L78.50,24.20 L78.14,24.19 L77.77,24.14 L77.42,24.03 L77.09,23.79 L76.81,23.38 L76.56,22.97 L76.30,22.71 L76.02,22.54 L75.73,22.41 L75.44,22.29 L75.15,22.17 L74.85,22.06 L74.54,21.98 L74.16,21.98 L73.69,22.09 L73.21,22.18 L72.81,22.12 L72.48,21.95 L72.19,21.72 L71.92,21.48 L71.68,21.21 L71.45,20.92 L71.28,20.59 L71.22,20.19 L71.31,19.71 L71.42,19.24 L71.42,18.86 L71.34,18.55 L71.23,18.25 L71.11,17.96 L70.99,17.67 L70.86,17.38 L70.69,17.10 L70.43,16.84 L70.02,16.59 L69.61,16.31 L69.37,15.98 L69.26,15.63 L69.21,15.26 L69.20,14.90 L69.21,14.54 L69.26,14.17 L69.37,13.82 L69.61,13.49 L70.02,13.21 L70.43,12.96 L70.69,12.70 L70.86,12.42 L70.99,12.13 L71.11,11.84 L71.23,11.55 L71.34,11.25 L71.42,10.94 L71.42,10.56 L71.31,10.09 L71.22,9.61 L71.28,9.21 L71.45,8.88 L71.68,8.59 L71.92,8.32 L72.19,8.08 L72.48,7.85 L72.81,7.68 L73.21,7.62 L73.69,7.71 L74.16,7.82 L74.54,7.82 L74.85,7.74 L75.15,7.63 L75.44,7.51 L75.73,7.39 L76.02,7.26 L76.30,7.09 L76.56,6.83 L76.81,6.42 L77.09,6.01 L77.42,5.77 L77.77,5.66 L78.14,5.61Z" fill="url(#st2)" stroke="#141414" stroke-width="0.6" stroke-opacity="0.8"/><circle cx="78.50" cy="14.90" r="1.8" fill="#1c1c1c"/><path d="M109.35,5.60 L109.71,5.61 L110.08,5.66 L110.43,5.77 L110.76,6.01 L111.04,6.42 L111.29,6.83 L111.55,7.09 L111.83,7.26 L112.12,7.39 L112.41,7.51 L112.70,7.63 L113.00,7.74 L113.31,7.82 L113.69,7.82 L114.16,7.71 L114.64,7.62 L115.04,7.68 L115.37,7.85 L115.66,8.08 L115.93,8.32 L116.17,8.59 L116.40,8.88 L116.57,9.21 L116.63,9.61 L116.54,10.09 L116.43,10.56 L116.43,10.94 L116.51,11.25 L116.62,11.55 L116.74,11.84 L116.86,12.13 L116.99,12.42 L117.16,12.70 L117.42,12.96 L117.83,13.21 L118.24,13.49 L118.48,13.82 L118.59,14.17 L118.64,14.54 L118.65,14.90 L118.64,15.26 L118.59,15.63 L118.48,15.98 L118.24,16.31 L117.83,16.59 L117.42,16.84 L117.16,17.10 L116.99,17.38 L116.86,17.67 L116.74,17.96 L116.62,18.25 L116.51,18.55 L116.43,18.86 L116.43,19.24 L116.54,19.71 L116.63,20.19 L116.57,20.59 L116.40,20.92 L116.17,21.21 L115.93,21.48 L115.66,21.72 L115.37,21.95 L115.04,22.12 L114.64,22.18 L114.16,22.09 L113.69,21.98 L113.31,21.98 L113.00,22.06 L112.70,22.17 L112.41,22.29 L112.12,22.41 L111.83,22.54 L111.55,22.71 L111.29,22.97 L111.04,23.38 L110.76,23.79 L110.43,24.03 L110.08,24.14 L109.71,24.19 L109.35,24.20 L108.99,24.19 L108.62,24.14 L108.27,24.03 L107.94,23.79 L107.66,23.38 L107.41,22.97 L107.15,22.71 L106.87,22.54 L106.58,22.41 L106.29,22.29 L106.00,22.17 L105.70,22.06 L105.39,21.98 L105.01,21.98 L104.54,22.09 L104.06,22.18 L103.66,22.12 L103.33,21.95 L103.04,21.72 L102.77,21.48 L102.53,21.21 L102.30,20.92 L102.13,20.59 L102.07,20.19 L102.16,19.71 L102.27,19.24 L102.27,18.86 L102.19,18.55 L102.08,18.25 L101.96,17.96 L101.84,17.67 L101.71,17.38 L101.54,17.10 L101.28,16.84 L100.87,16.59 L100.46,16.31 L100.22,15.98 L100.11,15.63 L100.06,15.26 L100.05,14.90 L100.06,14.54 L100.11,14.17 L100.22,13.82 L100.46,13.49 L100.87,13.21 L101.28,12.96 L101.54,12.70 L101.71,12.42 L101.84,12.13 L101.96,11.84 L102.08,11.55 L102.19,11.25 L102.27,10.94 L102.27,10.56 L102.16,10.09 L102.07,9.61 L102.13,9.21 L102.30,8.88 L102.53,8.59 L102.77,8.32 L103.04,8.08 L103.33,7.85 L103.66,7.68 L104.06,7.62 L104.54,7.71 L105.01,7.82 L105.39,7.82 L105.70,7.74 L106.00,7.63 L106.29,7.51 L106.58,7.39 L106.87,7.26 L107.15,7.09 L107.41,6.83 L107.66,6.42 L107.94,6.01 L108.27,5.77 L108.62,5.66 L108.99,5.61Z" fill="url(#st3)" stroke="#141414" stroke-width="0.6" stroke-opacity="0.8"/><circle cx="109.35" cy="14.90" r="1.8" fill="#1c1c1c"/><path d="M16.80,36.45 L17.16,36.46 L17.53,36.51 L17.88,36.62 L18.21,36.86 L18.49,37.27 L18.74,37.68 L19.00,37.94 L19.28,38.11 L19.57,38.24 L19.86,38.36 L20.15,38.48 L20.45,38.59 L20.76,38.67 L21.14,38.67 L21.61,38.56 L22.09,38.47 L22.49,38.53 L22.82,38.70 L23.11,38.93 L23.38,39.17 L23.62,39.44 L23.85,39.73 L24.02,40.06 L24.08,40.46 L23.99,40.94 L23.88,41.41 L23.88,41.79 L23.96,42.10 L24.07,42.40 L24.19,42.69 L24.31,42.98 L24.44,43.27 L24.61,43.55 L24.87,43.81 L25.28,44.06 L25.69,44.34 L25.93,44.67 L26.04,45.02 L26.09,45.39 L26.10,45.75 L26.09,46.11 L26.04,46.48 L25.93,46.83 L25.69,47.16 L25.28,47.44 L24.87,47.69 L24.61,47.95 L24.44,48.23 L24.31,48.52 L24.19,48.81 L24.07,49.10 L23.96,49.40 L23.88,49.71 L23.88,50.09 L23.99,50.56 L24.08,51.04 L24.02,51.44 L23.85,51.77 L23.62,52.06 L23.38,52.33 L23.11,52.57 L22.82,52.80 L22.49,52.97 L22.09,53.03 L21.61,52.94 L21.14,52.83 L20.76,52.83 L20.45,52.91 L20.15,53.02 L19.86,53.14 L19.57,53.26 L19.28,53.39 L19.00,53.56 L18.74,53.82 L18.49,54.23 L18.21,54.64 L17.88,54.88 L17.53,54.99 L17.16,55.04 L16.80,55.05 L16.44,55.04 L16.07,54.99 L15.72,54.88 L15.39,54.64 L15.11,54.23 L14.86,53.82 L14.60,53.56 L14.32,53.39 L14.03,53.26 L13.74,53.14 L13.45,53.02 L13.15,52.91 L12.84,52.83 L12.46,52.83 L11.99,52.94 L11.51,53.03 L11.11,52.97 L10.78,52.80 L10.49,52.57 L10.22,52.33 L9.98,52.06 L9.75,51.77 L9.58,51.44 L9.52,51.04 L9.61,50.56 L9.72,50.09 L9.72,49.71 L9.64,49.40 L9.53,49.10 L9.41,48.81 L9.29,48.52 L9.16,48.23 L8.99,47.95 L8.73,47.69 L8.32,47.44 L7.91,47.16 L7.67,46.83 L7.56,46.48 L7.51,46.11 L7.50,45.75 L7.51,45.39 L7.56,45.02 L7.67,44.67 L7.91,44.34 L8.32,44.06 L8.73,43.81 L8.99,43.55 L9.16,43.27 L9.29,42.98 L9.41,42.69 L9.53,42.40 L9.64,42.10 L9.72,41.79 L9.72,41.41 L9.61,40.94 L9.52,40.46 L9.58,40.06 L9.75,39.73 L9.98,39.44 L10.22,39.17 L10.49,38.93 L10.78,38.70 L11.11,38.53 L11.51,38.47 L11.99,38.56 L12.46,38.67 L12.84,38.67 L13.15,38.59 L13.45,38.48 L13.74,38.36 L14.03,38.24 L14.32,38.11 L14.60,37.94 L14.86,37.68 L15.11,37.27 L15.39,36.86 L15.72,36.62 L16.07,36.51 L16.44,36.46Z" fill="url(#st4)" stroke="#141414" stroke-width="0.6" stroke-opacity="0.8"/><circle cx="16.80" cy="45.75" r="1.8" fill="#1c1c1c"/><path d="M47.65,36.45 L48.01,36.46 L48.38,36.51 L48.73,36.62 L49.06,36.86 L49.34,37.27 L49.59,37.68 L49.85,37.94 L50.13,38.11 L50.42,38.24 L50.71,38.36 L51.00,38.48 L51.30,38.59 L51.61,38.67 L51.99,38.67 L52.46,38.56 L52.94,38.47 L53.34,38.53 L53.67,38.70 L53.96,38.93 L54.23,39.17 L54.47,39.44 L54.70,39.73 L54.87,40.06 L54.93,40.46 L54.84,40.94 L54.73,41.41 L54.73,41.79 L54.81,42.10 L54.92,42.40 L55.04,42.69 L55.16,42.98 L55.29,43.27 L55.46,43.55 L55.72,43.81 L56.13,44.06 L56.54,44.34 L56.78,44.67 L56.89,45.02 L56.94,45.39 L56.95,45.75 L56.94,46.11 L56.89,46.48 L56.78,46.83 L56.54,47.16 L56.13,47.44 L55.72,47.69 L55.46,47.95 L55.29,48.23 L55.16,48.52 L55.04,48.81 L54.92,49.10 L54.81,49.40 L54.73,49.71 L54.73,50.09 L54.84,50.56 L54.93,51.04 L54.87,51.44 L54.70,51.77 L54.47,52.06 L54.23,52.33 L53.96,52.57 L53.67,52.80 L53.34,52.97 L52.94,53.03 L52.46,52.94 L51.99,52.83 L51.61,52.83 L51.30,52.91 L51.00,53.02 L50.71,53.14 L50.42,53.26 L50.13,53.39 L49.85,53.56 L49.59,53.82 L49.34,54.23 L49.06,54.64 L48.73,54.88 L48.38,54.99 L48.01,55.04 L47.65,55.05 L47.29,55.04 L46.92,54.99 L46.57,54.88 L46.24,54.64 L45.96,54.23 L45.71,53.82 L45.45,53.56 L45.17,53.39 L44.88,53.26 L44.59,53.14 L44.30,53.02 L44.00,52.91 L43.69,52.83 L43.31,52.83 L42.84,52.94 L42.36,53.03 L41.96,52.97 L41.63,52.80 L41.34,52.57 L41.07,52.33 L40.83,52.06 L40.60,51.77 L40.43,51.44 L40.37,51.04 L40.46,50.56 L40.57,50.09 L40.57,49.71 L40.49,49.40 L40.38,49.10 L40.26,48.81 L40.14,48.52 L40.01,48.23 L39.84,47.95 L39.58,47.69 L39.17,47.44 L38.76,47.16 L38.52,46.83 L38.41,46.48 L38.36,46.11 L38.35,45.75 L38.36,45.39 L38.41,45.02 L38.52,44.67 L38.76,44.34 L39.17,44.06 L39.58,43.81 L39.84,43.55 L40.01,43.27 L40.14,42.98 L40.26,42.69 L40.38,42.40 L40.49,42.10 L40.57,41.79 L40.57,41.41 L40.46,40.94 L40.37,40.46 L40.43,40.06 L40.60,39.73 L40.83,39.44 L41.07,39.17 L41.34,38.93 L41.63,38.70 L41.96,38.53 L42.36,38.47 L42.84,38.56 L43.31,38.67 L43.69,38.67 L44.00,38.59 L44.30,38.48 L44.59,38.36 L44.88,38.24 L45.17,38.11 L45.45,37.94 L45.71,37.68 L45.96,37.27 L46.24,36.86 L46.57,36.62 L46.92,36.51 L47.29,36.46Z" fill="url(#st5)" stroke="#141414" stroke-width="0.6" stroke-opacity="0.8"/><circle cx="47.65" cy="45.75" r="1.8" fill="#1c1c1c"/><path d="M78.50,36.45 L78.86,36.46 L79.23,36.51 L79.58,36.62 L79.91,36.86 L80.19,37.27 L80.44,37.68 L80.70,37.94 L80.98,38.11 L81.27,38.24 L81.56,38.36 L81.85,38.48 L82.15,38.59 L82.46,38.67 L82.84,38.67 L83.31,38.56 L83.79,38.47 L84.19,38.53 L84.52,38.70 L84.81,38.93 L85.08,39.17 L85.32,39.44 L85.55,39.73 L85.72,40.06 L85.78,40.46 L85.69,40.94 L85.58,41.41 L85.58,41.79 L85.66,42.10 L85.77,42.40 L85.89,42.69 L86.01,42.98 L86.14,43.27 L86.31,43.55 L86.57,43.81 L86.98,44.06 L87.39,44.34 L87.63,44.67 L87.74,45.02 L87.79,45.39 L87.80,45.75 L87.79,46.11 L87.74,46.48 L87.63,46.83 L87.39,47.16 L86.98,47.44 L86.57,47.69 L86.31,47.95 L86.14,48.23 L86.01,48.52 L85.89,48.81 L85.77,49.10 L85.66,49.40 L85.58,49.71 L85.58,50.09 L85.69,50.56 L85.78,51.04 L85.72,51.44 L85.55,51.77 L85.32,52.06 L85.08,52.33 L84.81,52.57 L84.52,52.80 L84.19,52.97 L83.79,53.03 L83.31,52.94 L82.84,52.83 L82.46,52.83 L82.15,52.91 L81.85,53.02 L81.56,53.14 L81.27,53.26 L80.98,53.39 L80.70,53.56 L80.44,53.82 L80.19,54.23 L79.91,54.64 L79.58,54.88 L79.23,54.99 L78.86,55.04 L78.50,55.05 L78.14,55.04 L77.77,54.99 L77.42,54.88 L77.09,54.64 L76.81,54.23 L76.56,53.82 L76.30,53.56 L76.02,53.39 L75.73,53.26 L75.44,53.14 L75.15,53.02 L74.85,52.91 L74.54,52.83 L74.16,52.83 L73.69,52.94 L73.21,53.03 L72.81,52.97 L72.48,52.80 L72.19,52.57 L71.92,52.33 L71.68,52.06 L71.45,51.77 L71.28,51.44 L71.22,51.04 L71.31,50.56 L71.42,50.09 L71.42,49.71 L71.34,49.40 L71.23,49.10 L71.11,48.81 L70.99,48.52 L70.86,48.23 L70.69,47.95 L70.43,47.69 L70.02,47.44 L69.61,47.16 L69.37,46.83 L69.26,46.48 L69.21,46.11 L69.20,45.75 L69.21,45.39 L69.26,45.02 L69.37,44.67 L69.61,44.34 L70.02,44.06 L70.43,43.81 L70.69,43.55 L70.86,43.27 L70.99,42.98 L71.11,42.69 L71.23,42.40 L71.34,42.10 L71.42,41.79 L71.42,41.41 L71.31,40.94 L71.22,40.46 L71.28,40.06 L71.45,39.73 L71.68,39.44 L71.92,39.17 L72.19,38.93 L72.48,38.70 L72.81,38.53 L73.21,38.47 L73.69,38.56 L74.16,38.67 L74.54,38.67 L74.85,38.59 L75.15,38.48 L75.44,38.36 L75.73,38.24 L76.02,38.11 L76.30,37.94 L76.56,37.68 L76.81,37.27 L77.09,36.86 L77.42,36.62 L77.77,36.51 L78.14,36.46Z" fill="url(#st6)" stroke="#141414" stroke-width="0.6" stroke-opacity="0.8"/><circle cx="78.50" cy="45.75" r="1.8" fill="#1c1c1c"/><path d="M109.35,36.45 L109.71,36.46 L110.08,36.51 L110.43,36.62 L110.76,36.86 L111.04,37.27 L111.29,37.68 L111.55,37.94 L111.83,38.11 L112.12,38.24 L112.41,38.36 L112.70,38.48 L113.00,38.59 L113.31,38.67 L113.69,38.67 L114.16,38.56 L114.64,38.47 L115.04,38.53 L115.37,38.70 L115.66,38.93 L115.93,39.17 L116.17,39.44 L116.40,39.73 L116.57,40.06 L116.63,40.46 L116.54,40.94 L116.43,41.41 L116.43,41.79 L116.51,42.10 L116.62,42.40 L116.74,42.69 L116.86,42.98 L116.99,43.27 L117.16,43.55 L117.42,43.81 L117.83,44.06 L118.24,44.34 L118.48,44.67 L118.59,45.02 L118.64,45.39 L118.65,45.75 L118.64,46.11 L118.59,46.48 L118.48,46.83 L118.24,47.16 L117.83,47.44 L117.42,47.69 L117.16,47.95 L116.99,48.23 L116.86,48.52 L116.74,48.81 L116.62,49.10 L116.51,49.40 L116.43,49.71 L116.43,50.09 L116.54,50.56 L116.63,51.04 L116.57,51.44 L116.40,51.77 L116.17,52.06 L115.93,52.33 L115.66,52.57 L115.37,52.80 L115.04,52.97 L114.64,53.03 L114.16,52.94 L113.69,52.83 L113.31,52.83 L113.00,52.91 L112.70,53.02 L112.41,53.14 L112.12,53.26 L111.83,53.39 L111.55,53.56 L111.29,53.82 L111.04,54.23 L110.76,54.64 L110.43,54.88 L110.08,54.99 L109.71,55.04 L109.35,55.05 L108.99,55.04 L108.62,54.99 L108.27,54.88 L107.94,54.64 L107.66,54.23 L107.41,53.82 L107.15,53.56 L106.87,53.39 L106.58,53.26 L106.29,53.14 L106.00,53.02 L105.70,52.91 L105.39,52.83 L105.01,52.83 L104.54,52.94 L104.06,53.03 L103.66,52.97 L103.33,52.80 L103.04,52.57 L102.77,52.33 L102.53,52.06 L102.30,51.77 L102.13,51.44 L102.07,51.04 L102.16,50.56 L102.27,50.09 L102.27,49.71 L102.19,49.40 L102.08,49.10 L101.96,48.81 L101.84,48.52 L101.71,48.23 L101.54,47.95 L101.28,47.69 L100.87,47.44 L100.46,47.16 L100.22,46.83 L100.11,46.48 L100.06,46.11 L100.05,45.75 L100.06,45.39 L100.11,45.02 L100.22,44.67 L100.46,44.34 L100.87,44.06 L101.28,43.81 L101.54,43.55 L101.71,43.27 L101.84,42.98 L101.96,42.69 L102.08,42.40 L102.19,42.10 L102.27,41.79 L102.27,41.41 L102.16,40.94 L102.07,40.46 L102.13,40.06 L102.30,39.73 L102.53,39.44 L102.77,39.17 L103.04,38.93 L103.33,38.70 L103.66,38.53 L104.06,38.47 L104.54,38.56 L105.01,38.67 L105.39,38.67 L105.70,38.59 L106.00,38.48 L106.29,38.36 L106.58,38.24 L106.87,38.11 L107.15,37.94 L107.41,37.68 L107.66,37.27 L107.94,36.86 L108.27,36.62 L108.62,36.51 L108.99,36.46Z" fill="url(#st7)" stroke="#141414" stroke-width="0.6" stroke-opacity="0.8"/><circle cx="109.35" cy="45.75" r="1.8" fill="#1c1c1c"/><path d="M16.80,67.30 L17.16,67.31 L17.53,67.36 L17.88,67.47 L18.21,67.71 L18.49,68.12 L18.74,68.53 L19.00,68.79 L19.28,68.96 L19.57,69.09 L19.86,69.21 L20.15,69.33 L20.45,69.44 L20.76,69.52 L21.14,69.52 L21.61,69.41 L22.09,69.32 L22.49,69.38 L22.82,69.55 L23.11,69.78 L23.38,70.02 L23.62,70.29 L23.85,70.58 L24.02,70.91 L24.08,71.31 L23.99,71.79 L23.88,72.26 L23.88,72.64 L23.96,72.95 L24.07,73.25 L24.19,73.54 L24.31,73.83 L24.44,74.12 L24.61,74.40 L24.87,74.66 L25.28,74.91 L25.69,75.19 L25.93,75.52 L26.04,75.87 L26.09,76.24 L26.10,76.60 L26.09,76.96 L26.04,77.33 L25.93,77.68 L25.69,78.01 L25.28,78.29 L24.87,78.54 L24.61,78.80 L24.44,79.08 L24.31,79.37 L24.19,79.66 L24.07,79.95 L23.96,80.25 L23.88,80.56 L23.88,80.94 L23.99,81.41 L24.08,81.89 L24.02,82.29 L23.85,82.62 L23.62,82.91 L23.38,83.18 L23.11,83.42 L22.82,83.65 L22.49,83.82 L22.09,83.88 L21.61,83.79 L21.14,83.68 L20.76,83.68 L20.45,83.76 L20.15,83.87 L19.86,83.99 L19.57,84.11 L19.28,84.24 L19.00,84.41 L18.74,84.67 L18.49,85.08 L18.21,85.49 L17.88,85.73 L17.53,85.84 L17.16,85.89 L16.80,85.90 L16.44,85.89 L16.07,85.84 L15.72,85.73 L15.39,85.49 L15.11,85.08 L14.86,84.67 L14.60,84.41 L14.32,84.24 L14.03,84.11 L13.74,83.99 L13.45,83.87 L13.15,83.76 L12.84,83.68 L12.46,83.68 L11.99,83.79 L11.51,83.88 L11.11,83.82 L10.78,83.65 L10.49,83.42 L10.22,83.18 L9.98,82.91 L9.75,82.62 L9.58,82.29 L9.52,81.89 L9.61,81.41 L9.72,80.94 L9.72,80.56 L9.64,80.25 L9.53,79.95 L9.41,79.66 L9.29,79.37 L9.16,79.08 L8.99,78.80 L8.73,78.54 L8.32,78.29 L7.91,78.01 L7.67,77.68 L7.56,77.33 L7.51,76.96 L7.50,76.60 L7.51,76.24 L7.56,75.87 L7.67,75.52 L7.91,75.19 L8.32,74.91 L8.73,74.66 L8.99,74.40 L9.16,74.12 L9.29,73.83 L9.41,73.54 L9.53,73.25 L9.64,72.95 L9.72,72.64 L9.72,72.26 L9.61,71.79 L9.52,71.31 L9.58,70.91 L9.75,70.58 L9.98,70.29 L10.22,70.02 L10.49,69.78 L10.78,69.55 L11.11,69.38 L11.51,69.32 L11.99,69.41 L12.46,69.52 L12.84,69.52 L13.15,69.44 L13.45,69.33 L13.74,69.21 L14.03,69.09 L14.32,68.96 L14.60,68.79 L14.86,68.53 L15.11,68.12 L15.39,67.71 L15.72,67.47 L16.07,67.36 L16.44,67.31Z" fill="url(#st8)" stroke="#141414" stroke-width="0.6" stroke-opacity="0.8"/><circle cx="16.80" cy="76.60" r="1.8" fill="#1c1c1c"/><path d="M47.65,67.30 L48.01,67.31 L48.38,67.36 L48.73,67.47 L49.06,67.71 L49.34,68.12 L49.59,68.53 L49.85,68.79 L50.13,68.96 L50.42,69.09 L50.71,69.21 L51.00,69.33 L51.30,69.44 L51.61,69.52 L51.99,69.52 L52.46,69.41 L52.94,69.32 L53.34,69.38 L53.67,69.55 L53.96,69.78 L54.23,70.02 L54.47,70.29 L54.70,70.58 L54.87,70.91 L54.93,71.31 L54.84,71.79 L54.73,72.26 L54.73,72.64 L54.81,72.95 L54.92,73.25 L55.04,73.54 L55.16,73.83 L55.29,74.12 L55.46,74.40 L55.72,74.66 L56.13,74.91 L56.54,75.19 L56.78,75.52 L56.89,75.87 L56.94,76.24 L56.95,76.60 L56.94,76.96 L56.89,77.33 L56.78,77.68 L56.54,78.01 L56.13,78.29 L55.72,78.54 L55.46,78.80 L55.29,79.08 L55.16,79.37 L55.04,79.66 L54.92,79.95 L54.81,80.25 L54.73,80.56 L54.73,80.94 L54.84,81.41 L54.93,81.89 L54.87,82.29 L54.70,82.62 L54.47,82.91 L54.23,83.18 L53.96,83.42 L53.67,83.65 L53.34,83.82 L52.94,83.88 L52.46,83.79 L51.99,83.68 L51.61,83.68 L51.30,83.76 L51.00,83.87 L50.71,83.99 L50.42,84.11 L50.13,84.24 L49.85,84.41 L49.59,84.67 L49.34,85.08 L49.06,85.49 L48.73,85.73 L48.38,85.84 L48.01,85.89 L47.65,85.90 L47.29,85.89 L46.92,85.84 L46.57,85.73 L46.24,85.49 L45.96,85.08 L45.71,84.67 L45.45,84.41 L45.17,84.24 L44.88,84.11 L44.59,83.99 L44.30,83.87 L44.00,83.76 L43.69,83.68 L43.31,83.68 L42.84,83.79 L42.36,83.88 L41.96,83.82 L41.63,83.65 L41.34,83.42 L41.07,83.18 L40.83,82.91 L40.60,82.62 L40.43,82.29 L40.37,81.89 L40.46,81.41 L40.57,80.94 L40.57,80.56 L40.49,80.25 L40.38,79.95 L40.26,79.66 L40.14,79.37 L40.01,79.08 L39.84,78.80 L39.58,78.54 L39.17,78.29 L38.76,78.01 L38.52,77.68 L38.41,77.33 L38.36,76.96 L38.35,76.60 L38.36,76.24 L38.41,75.87 L38.52,75.52 L38.76,75.19 L39.17,74.91 L39.58,74.66 L39.84,74.40 L40.01,74.12 L40.14,73.83 L40.26,73.54 L40.38,73.25 L40.49,72.95 L40.57,72.64 L40.57,72.26 L40.46,71.79 L40.37,71.31 L40.43,70.91 L40.60,70.58 L40.83,70.29 L41.07,70.02 L41.34,69.78 L41.63,69.55 L41.96,69.38 L42.36,69.32 L42.84,69.41 L43.31,69.52 L43.69,69.52 L44.00,69.44 L44.30,69.33 L44.59,69.21 L44.88,69.09 L45.17,68.96 L45.45,68.79 L45.71,68.53 L45.96,68.12 L46.24,67.71 L46.57,67.47 L46.92,67.36 L47.29,67.31Z" fill="url(#st9)" stroke="#141414" stroke-width="0.6" stroke-opacity="0.8"/><circle cx="47.65" cy="76.60" r="1.8" fill="#1c1c1c"/><path d="M78.50,67.30 L78.86,67.31 L79.23,67.36 L79.58,67.47 L79.91,67.71 L80.19,68.12 L80.44,68.53 L80.70,68.79 L80.98,68.96 L81.27,69.09 L81.56,69.21 L81.85,69.33 L82.15,69.44 L82.46,69.52 L82.84,69.52 L83.31,69.41 L83.79,69.32 L84.19,69.38 L84.52,69.55 L84.81,69.78 L85.08,70.02 L85.32,70.29 L85.55,70.58 L85.72,70.91 L85.78,71.31 L85.69,71.79 L85.58,72.26 L85.58,72.64 L85.66,72.95 L85.77,73.25 L85.89,73.54 L86.01,73.83 L86.14,74.12 L86.31,74.40 L86.57,74.66 L86.98,74.91 L87.39,75.19 L87.63,75.52 L87.74,75.87 L87.79,76.24 L87.80,76.60 L87.79,76.96 L87.74,77.33 L87.63,77.68 L87.39,78.01 L86.98,78.29 L86.57,78.54 L86.31,78.80 L86.14,79.08 L86.01,79.37 L85.89,79.66 L85.77,79.95 L85.66,80.25 L85.58,80.56 L85.58,80.94 L85.69,81.41 L85.78,81.89 L85.72,82.29 L85.55,82.62 L85.32,82.91 L85.08,83.18 L84.81,83.42 L84.52,83.65 L84.19,83.82 L83.79,83.88 L83.31,83.79 L82.84,83.68 L82.46,83.68 L82.15,83.76 L81.85,83.87 L81.56,83.99 L81.27,84.11 L80.98,84.24 L80.70,84.41 L80.44,84.67 L80.19,85.08 L79.91,85.49 L79.58,85.73 L79.23,85.84 L78.86,85.89 L78.50,85.90 L78.14,85.89 L77.77,85.84 L77.42,85.73 L77.09,85.49 L76.81,85.08 L76.56,84.67 L76.30,84.41 L76.02,84.24 L75.73,84.11 L75.44,83.99 L75.15,83.87 L74.85,83.76 L74.54,83.68 L74.16,83.68 L73.69,83.79 L73.21,83.88 L72.81,83.82 L72.48,83.65 L72.19,83.42 L71.92,83.18 L71.68,82.91 L71.45,82.62 L71.28,82.29 L71.22,81.89 L71.31,81.41 L71.42,80.94 L71.42,80.56 L71.34,80.25 L71.23,79.95 L71.11,79.66 L70.99,79.37 L70.86,79.08 L70.69,78.80 L70.43,78.54 L70.02,78.29 L69.61,78.01 L69.37,77.68 L69.26,77.33 L69.21,76.96 L69.20,76.60 L69.21,76.24 L69.26,75.87 L69.37,75.52 L69.61,75.19 L70.02,74.91 L70.43,74.66 L70.69,74.40 L70.86,74.12 L70.99,73.83 L71.11,73.54 L71.23,73.25 L71.34,72.95 L71.42,72.64 L71.42,72.26 L71.31,71.79 L71.22,71.31 L71.28,70.91 L71.45,70.58 L71.68,70.29 L71.92,70.02 L72.19,69.78 L72.48,69.55 L72.81,69.38 L73.21,69.32 L73.69,69.41 L74.16,69.52 L74.54,69.52 L74.85,69.44 L75.15,69.33 L75.44,69.21 L75.73,69.09 L76.02,68.96 L76.30,68.79 L76.56,68.53 L76.81,68.12 L77.09,67.71 L77.42,67.47 L77.77,67.36 L78.14,67.31Z" fill="url(#st10)" stroke="#141414" stroke-width="0.6" stroke-opacity="0.8"/><circle cx="78.50" cy="76.60" r="1.8" fill="#1c1c1c"/><path d="M109.35,67.30 L109.71,67.31 L110.08,67.36 L110.43,67.47 L110.76,67.71 L111.04,68.12 L111.29,68.53 L111.55,68.79 L111.83,68.96 L112.12,69.09 L112.41,69.21 L112.70,69.33 L113.00,69.44 L113.31,69.52 L113.69,69.52 L114.16,69.41 L114.64,69.32 L115.04,69.38 L115.37,69.55 L115.66,69.78 L115.93,70.02 L116.17,70.29 L116.40,70.58 L116.57,70.91 L116.63,71.31 L116.54,71.79 L116.43,72.26 L116.43,72.64 L116.51,72.95 L116.62,73.25 L116.74,73.54 L116.86,73.83 L116.99,74.12 L117.16,74.40 L117.42,74.66 L117.83,74.91 L118.24,75.19 L118.48,75.52 L118.59,75.87 L118.64,76.24 L118.65,76.60 L118.64,76.96 L118.59,77.33 L118.48,77.68 L118.24,78.01 L117.83,78.29 L117.42,78.54 L117.16,78.80 L116.99,79.08 L116.86,79.37 L116.74,79.66 L116.62,79.95 L116.51,80.25 L116.43,80.56 L116.43,80.94 L116.54,81.41 L116.63,81.89 L116.57,82.29 L116.40,82.62 L116.17,82.91 L115.93,83.18 L115.66,83.42 L115.37,83.65 L115.04,83.82 L114.64,83.88 L114.16,83.79 L113.69,83.68 L113.31,83.68 L113.00,83.76 L112.70,83.87 L112.41,83.99 L112.12,84.11 L111.83,84.24 L111.55,84.41 L111.29,84.67 L111.04,85.08 L110.76,85.49 L110.43,85.73 L110.08,85.84 L109.71,85.89 L109.35,85.90 L108.99,85.89 L108.62,85.84 L108.27,85.73 L107.94,85.49 L107.66,85.08 L107.41,84.67 L107.15,84.41 L106.87,84.24 L106.58,84.11 L106.29,83.99 L106.00,83.87 L105.70,83.76 L105.39,83.68 L105.01,83.68 L104.54,83.79 L104.06,83.88 L103.66,83.82 L103.33,83.65 L103.04,83.42 L102.77,83.18 L102.53,82.91 L102.30,82.62 L102.13,82.29 L102.07,81.89 L102.16,81.41 L102.27,80.94 L102.27,80.56 L102.19,80.25 L102.08,79.95 L101.96,79.66 L101.84,79.37 L101.71,79.08 L101.54,78.80 L101.28,78.54 L100.87,78.29 L100.46,78.01 L100.22,77.68 L100.11,77.33 L100.06,76.96 L100.05,76.60 L100.06,76.24 L100.11,75.87 L100.22,75.52 L100.46,75.19 L100.87,74.91 L101.28,74.66 L101.54,74.40 L101.71,74.12 L101.84,73.83 L101.96,73.54 L102.08,73.25 L102.19,72.95 L102.27,72.64 L102.27,72.26 L102.16,71.79 L102.07,71.31 L102.13,70.91 L102.30,70.58 L102.53,70.29 L102.77,70.02 L103.04,69.78 L103.33,69.55 L103.66,69.38 L104.06,69.32 L104.54,69.41 L105.01,69.52 L105.39,69.52 L105.70,69.44 L106.00,69.33 L106.29,69.21 L106.58,69.09 L106.87,68.96 L107.15,68.79 L107.41,68.53 L107.66,68.12 L107.94,67.71 L108.27,67.47 L108.62,67.36 L108.99,67.31Z" fill="url(#st11)" stroke="#141414" stroke-width="0.6" stroke-opacity="0.8"/><circle cx="109.35" cy="76.60" r="1.8" fill="#1c1c1c"/><path d="M16.80,98.15 L17.16,98.16 L17.53,98.21 L17.88,98.32 L18.21,98.56 L18.49,98.97 L18.74,99.38 L19.00,99.64 L19.28,99.81 L19.57,99.94 L19.86,100.06 L20.15,100.18 L20.45,100.29 L20.76,100.37 L21.14,100.37 L21.61,100.26 L22.09,100.17 L22.49,100.23 L22.82,100.40 L23.11,100.63 L23.38,100.87 L23.62,101.14 L23.85,101.43 L24.02,101.76 L24.08,102.16 L23.99,102.64 L23.88,103.11 L23.88,103.49 L23.96,103.80 L24.07,104.10 L24.19,104.39 L24.31,104.68 L24.44,104.97 L24.61,105.25 L24.87,105.51 L25.28,105.76 L25.69,106.04 L25.93,106.37 L26.04,106.72 L26.09,107.09 L26.10,107.45 L26.09,107.81 L26.04,108.18 L25.93,108.53 L25.69,108.86 L25.28,109.14 L24.87,109.39 L24.61,109.65 L24.44,109.93 L24.31,110.22 L24.19,110.51 L24.07,110.80 L23.96,111.10 L23.88,111.41 L23.88,111.79 L23.99,112.26 L24.08,112.74 L24.02,113.14 L23.85,113.47 L23.62,113.76 L23.38,114.03 L23.11,114.27 L22.82,114.50 L22.49,114.67 L22.09,114.73 L21.61,114.64 L21.14,114.53 L20.76,114.53 L20.45,114.61 L20.15,114.72 L19.86,114.84 L19.57,114.96 L19.28,115.09 L19.00,115.26 L18.74,115.52 L18.49,115.93 L18.21,116.34 L17.88,116.58 L17.53,116.69 L17.16,116.74 L16.80,116.75 L16.44,116.74 L16.07,116.69 L15.72,116.58 L15.39,116.34 L15.11,115.93 L14.86,115.52 L14.60,115.26 L14.32,115.09 L14.03,114.96 L13.74,114.84 L13.45,114.72 L13.15,114.61 L12.84,114.53 L12.46,114.53 L11.99,114.64 L11.51,114.73 L11.11,114.67 L10.78,114.50 L10.49,114.27 L10.22,114.03 L9.98,113.76 L9.75,113.47 L9.58,113.14 L9.52,112.74 L9.61,112.26 L9.72,111.79 L9.72,111.41 L9.64,111.10 L9.53,110.80 L9.41,110.51 L9.29,110.22 L9.16,109.93 L8.99,109.65 L8.73,109.39 L8.32,109.14 L7.91,108.86 L7.67,108.53 L7.56,108.18 L7.51,107.81 L7.50,107.45 L7.51,107.09 L7.56,106.72 L7.67,106.37 L7.91,106.04 L8.32,105.76 L8.73,105.51 L8.99,105.25 L9.16,104.97 L9.29,104.68 L9.41,104.39 L9.53,104.10 L9.64,103.80 L9.72,103.49 L9.72,103.11 L9.61,102.64 L9.52,102.16 L9.58,101.76 L9.75,101.43 L9.98,101.14 L10.22,100.87 L10.49,100.63 L10.78,100.40 L11.11,100.23 L11.51,100.17 L11.99,100.26 L12.46,100.37 L12.84,100.37 L13.15,100.29 L13.45,100.18 L13.74,100.06 L14.03,99.94 L14.32,99.81 L14.60,99.64 L14.86,99.38 L15.11,98.97 L15.39,98.56 L15.72,98.32 L16.07,98.21 L16.44,98.16Z" fill="url(#st12)" stroke="#141414" stroke-width="0.6" stroke-opacity="0.8"/><circle cx="16.80" cy="107.45" r="1.8" fill="#1c1c1c"/><path d="M47.65,98.15 L48.01,98.16 L48.38,98.21 L48.73,98.32 L49.06,98.56 L49.34,98.97 L49.59,99.38 L49.85,99.64 L50.13,99.81 L50.42,99.94 L50.71,100.06 L51.00,100.18 L51.30,100.29 L51.61,100.37 L51.99,100.37 L52.46,100.26 L52.94,100.17 L53.34,100.23 L53.67,100.40 L53.96,100.63 L54.23,100.87 L54.47,101.14 L54.70,101.43 L54.87,101.76 L54.93,102.16 L54.84,102.64 L54.73,103.11 L54.73,103.49 L54.81,103.80 L54.92,104.10 L55.04,104.39 L55.16,104.68 L55.29,104.97 L55.46,105.25 L55.72,105.51 L56.13,105.76 L56.54,106.04 L56.78,106.37 L56.89,106.72 L56.94,107.09 L56.95,107.45 L56.94,107.81 L56.89,108.18 L56.78,108.53 L56.54,108.86 L56.13,109.14 L55.72,109.39 L55.46,109.65 L55.29,109.93 L55.16,110.22 L55.04,110.51 L54.92,110.80 L54.81,111.10 L54.73,111.41 L54.73,111.79 L54.84,112.26 L54.93,112.74 L54.87,113.14 L54.70,113.47 L54.47,113.76 L54.23,114.03 L53.96,114.27 L53.67,114.50 L53.34,114.67 L52.94,114.73 L52.46,114.64 L51.99,114.53 L51.61,114.53 L51.30,114.61 L51.00,114.72 L50.71,114.84 L50.42,114.96 L50.13,115.09 L49.85,115.26 L49.59,115.52 L49.34,115.93 L49.06,116.34 L48.73,116.58 L48.38,116.69 L48.01,116.74 L47.65,116.75 L47.29,116.74 L46.92,116.69 L46.57,116.58 L46.24,116.34 L45.96,115.93 L45.71,115.52 L45.45,115.26 L45.17,115.09 L44.88,114.96 L44.59,114.84 L44.30,114.72 L44.00,114.61 L43.69,114.53 L43.31,114.53 L42.84,114.64 L42.36,114.73 L41.96,114.67 L41.63,114.50 L41.34,114.27 L41.07,114.03 L40.83,113.76 L40.60,113.47 L40.43,113.14 L40.37,112.74 L40.46,112.26 L40.57,111.79 L40.57,111.41 L40.49,111.10 L40.38,110.80 L40.26,110.51 L40.14,110.22 L40.01,109.93 L39.84,109.65 L39.58,109.39 L39.17,109.14 L38.76,108.86 L38.52,108.53 L38.41,108.18 L38.36,107.81 L38.35,107.45 L38.36,107.09 L38.41,106.72 L38.52,106.37 L38.76,106.04 L39.17,105.76 L39.58,105.51 L39.84,105.25 L40.01,104.97 L40.14,104.68 L40.26,104.39 L40.38,104.10 L40.49,103.80 L40.57,103.49 L40.57,103.11 L40.46,102.64 L40.37,102.16 L40.43,101.76 L40.60,101.43 L40.83,101.14 L41.07,100.87 L41.34,100.63 L41.63,100.40 L41.96,100.23 L42.36,100.17 L42.84,100.26 L43.31,100.37 L43.69,100.37 L44.00,100.29 L44.30,100.18 L44.59,100.06 L44.88,99.94 L45.17,99.81 L45.45,99.64 L45.71,99.38 L45.96,98.97 L46.24,98.56 L46.57,98.32 L46.92,98.21 L47.29,98.16Z" fill="url(#st13)" stroke="#141414" stroke-width="0.6" stroke-opacity="0.8"/><circle cx="47.65" cy="107.45" r="1.8" fill="#1c1c1c"/><path d="M78.50,98.15 L78.86,98.16 L79.23,98.21 L79.58,98.32 L79.91,98.56 L80.19,98.97 L80.44,99.38 L80.70,99.64 L80.98,99.81 L81.27,99.94 L81.56,100.06 L81.85,100.18 L82.15,100.29 L82.46,100.37 L82.84,100.37 L83.31,100.26 L83.79,100.17 L84.19,100.23 L84.52,100.40 L84.81,100.63 L85.08,100.87 L85.32,101.14 L85.55,101.43 L85.72,101.76 L85.78,102.16 L85.69,102.64 L85.58,103.11 L85.58,103.49 L85.66,103.80 L85.77,104.10 L85.89,104.39 L86.01,104.68 L86.14,104.97 L86.31,105.25 L86.57,105.51 L86.98,105.76 L87.39,106.04 L87.63,106.37 L87.74,106.72 L87.79,107.09 L87.80,107.45 L87.79,107.81 L87.74,108.18 L87.63,108.53 L87.39,108.86 L86.98,109.14 L86.57,109.39 L86.31,109.65 L86.14,109.93 L86.01,110.22 L85.89,110.51 L85.77,110.80 L85.66,111.10 L85.58,111.41 L85.58,111.79 L85.69,112.26 L85.78,112.74 L85.72,113.14 L85.55,113.47 L85.32,113.76 L85.08,114.03 L84.81,114.27 L84.52,114.50 L84.19,114.67 L83.79,114.73 L83.31,114.64 L82.84,114.53 L82.46,114.53 L82.15,114.61 L81.85,114.72 L81.56,114.84 L81.27,114.96 L80.98,115.09 L80.70,115.26 L80.44,115.52 L80.19,115.93 L79.91,116.34 L79.58,116.58 L79.23,116.69 L78.86,116.74 L78.50,116.75 L78.14,116.74 L77.77,116.69 L77.42,116.58 L77.09,116.34 L76.81,115.93 L76.56,115.52 L76.30,115.26 L76.02,115.09 L75.73,114.96 L75.44,114.84 L75.15,114.72 L74.85,114.61 L74.54,114.53 L74.16,114.53 L73.69,114.64 L73.21,114.73 L72.81,114.67 L72.48,114.50 L72.19,114.27 L71.92,114.03 L71.68,113.76 L71.45,113.47 L71.28,113.14 L71.22,112.74 L71.31,112.26 L71.42,111.79 L71.42,111.41 L71.34,111.10 L71.23,110.80 L71.11,110.51 L70.99,110.22 L70.86,109.93 L70.69,109.65 L70.43,109.39 L70.02,109.14 L69.61,108.86 L69.37,108.53 L69.26,108.18 L69.21,107.81 L69.20,107.45 L69.21,107.09 L69.26,106.72 L69.37,106.37 L69.61,106.04 L70.02,105.76 L70.43,105.51 L70.69,105.25 L70.86,104.97 L70.99,104.68 L71.11,104.39 L71.23,104.10 L71.34,103.80 L71.42,103.49 L71.42,103.11 L71.31,102.64 L71.22,102.16 L71.28,101.76 L71.45,101.43 L71.68,101.14 L71.92,100.87 L72.19,100.63 L72.48,100.40 L72.81,100.23 L73.21,100.17 L73.69,100.26 L74.16,100.37 L74.54,100.37 L74.85,100.29 L75.15,100.18 L75.44,100.06 L75.73,99.94 L76.02,99.81 L76.30,99.64 L76.56,99.38 L76.81,98.97 L77.09,98.56 L77.42,98.32 L77.77,98.21 L78.14,98.16Z" fill="url(#st14)" stroke="#141414" stroke-width="0.6" stroke-opacity="0.8"/><circle cx="78.50" cy="107.45" r="1.8" fill="#1c1c1c"/><path d="M109.35,98.15 L109.71,98.16 L110.08,98.21 L110.43,98.32 L110.76,98.56 L111.04,98.97 L111.29,99.38 L111.55,99.64 L111.83,99.81 L112.12,99.94 L112.41,100.06 L112.70,100.18 L113.00,100.29 L113.31,100.37 L113.69,100.37 L114.16,100.26 L114.64,100.17 L115.04,100.23 L115.37,100.40 L115.66,100.63 L115.93,100.87 L116.17,101.14 L116.40,101.43 L116.57,101.76 L116.63,102.16 L116.54,102.64 L116.43,103.11 L116.43,103.49 L116.51,103.80 L116.62,104.10 L116.74,104.39 L116.86,104.68 L116.99,104.97 L117.16,105.25 L117.42,105.51 L117.83,105.76 L118.24,106.04 L118.48,106.37 L118.59,106.72 L118.64,107.09 L118.65,107.45 L118.64,107.81 L118.59,108.18 L118.48,108.53 L118.24,108.86 L117.83,109.14 L117.42,109.39 L117.16,109.65 L116.99,109.93 L116.86,110.22 L116.74,110.51 L116.62,110.80 L116.51,111.10 L116.43,111.41 L116.43,111.79 L116.54,112.26 L116.63,112.74 L116.57,113.14 L116.40,113.47 L116.17,113.76 L115.93,114.03 L115.66,114.27 L115.37,114.50 L115.04,114.67 L114.64,114.73 L114.16,114.64 L113.69,114.53 L113.31,114.53 L113.00,114.61 L112.70,114.72 L112.41,114.84 L112.12,114.96 L111.83,115.09 L111.55,115.26 L111.29,115.52 L111.04,115.93 L110.76,116.34 L110.43,116.58 L110.08,116.69 L109.71,116.74 L109.35,116.75 L108.99,116.74 L108.62,116.69 L108.27,116.58 L107.94,116.34 L107.66,115.93 L107.41,115.52 L107.15,115.26 L106.87,115.09 L106.58,114.96 L106.29,114.84 L106.00,114.72 L105.70,114.61 L105.39,114.53 L105.01,114.53 L104.54,114.64 L104.06,114.73 L103.66,114.67 L103.33,114.50 L103.04,114.27 L102.77,114.03 L102.53,113.76 L102.30,113.47 L102.13,113.14 L102.07,112.74 L102.16,112.26 L102.27,111.79 L102.27,111.41 L102.19,111.10 L102.08,110.80 L101.96,110.51 L101.84,110.22 L101.71,109.93 L101.54,109.65 L101.28,109.39 L100.87,109.14 L100.46,108.86 L100.22,108.53 L100.11,108.18 L100.06,107.81 L100.05,107.45 L100.06,107.09 L100.11,106.72 L100.22,106.37 L100.46,106.04 L100.87,105.76 L101.28,105.51 L101.54,105.25 L101.71,104.97 L101.84,104.68 L101.96,104.39 L102.08,104.10 L102.19,103.80 L102.27,103.49 L102.27,103.11 L102.16,102.64 L102.07,102.16 L102.13,101.76 L102.30,101.43 L102.53,101.14 L102.77,100.87 L103.04,100.63 L103.33,100.40 L103.66,100.23 L104.06,100.17 L104.54,100.26 L105.01,100.37 L105.39,100.37 L105.70,100.29 L106.00,100.18 L106.29,100.06 L106.58,99.94 L106.87,99.81 L107.15,99.64 L107.41,99.38 L107.66,98.97 L107.94,98.56 L108.27,98.32 L108.62,98.21 L108.99,98.16Z" fill="url(#st15)" stroke="#141414" stroke-width="0.6" stroke-opacity="0.8"/><circle cx="109.35" cy="107.45" r="1.8" fill="#1c1c1c"/><path d="M16.80,129.00 L17.16,129.01 L17.53,129.06 L17.88,129.17 L18.21,129.41 L18.49,129.82 L18.74,130.23 L19.00,130.49 L19.28,130.66 L19.57,130.79 L19.86,130.91 L20.15,131.03 L20.45,131.14 L20.76,131.22 L21.14,131.22 L21.61,131.11 L22.09,131.02 L22.49,131.08 L22.82,131.25 L23.11,131.48 L23.38,131.72 L23.62,131.99 L23.85,132.28 L24.02,132.61 L24.08,133.01 L23.99,133.49 L23.88,133.96 L23.88,134.34 L23.96,134.65 L24.07,134.95 L24.19,135.24 L24.31,135.53 L24.44,135.82 L24.61,136.10 L24.87,136.36 L25.28,136.61 L25.69,136.89 L25.93,137.22 L26.04,137.57 L26.09,137.94 L26.10,138.30 L26.09,138.66 L26.04,139.03 L25.93,139.38 L25.69,139.71 L25.28,139.99 L24.87,140.24 L24.61,140.50 L24.44,140.78 L24.31,141.07 L24.19,141.36 L24.07,141.65 L23.96,141.95 L23.88,142.26 L23.88,142.64 L23.99,143.11 L24.08,143.59 L24.02,143.99 L23.85,144.32 L23.62,144.61 L23.38,144.88 L23.11,145.12 L22.82,145.35 L22.49,145.52 L22.09,145.58 L21.61,145.49 L21.14,145.38 L20.76,145.38 L20.45,145.46 L20.15,145.57 L19.86,145.69 L19.57,145.81 L19.28,145.94 L19.00,146.11 L18.74,146.37 L18.49,146.78 L18.21,147.19 L17.88,147.43 L17.53,147.54 L17.16,147.59 L16.80,147.60 L16.44,147.59 L16.07,147.54 L15.72,147.43 L15.39,147.19 L15.11,146.78 L14.86,146.37 L14.60,146.11 L14.32,145.94 L14.03,145.81 L13.74,145.69 L13.45,145.57 L13.15,145.46 L12.84,145.38 L12.46,145.38 L11.99,145.49 L11.51,145.58 L11.11,145.52 L10.78,145.35 L10.49,145.12 L10.22,144.88 L9.98,144.61 L9.75,144.32 L9.58,143.99 L9.52,143.59 L9.61,143.11 L9.72,142.64 L9.72,142.26 L9.64,141.95 L9.53,141.65 L9.41,141.36 L9.29,141.07 L9.16,140.78 L8.99,140.50 L8.73,140.24 L8.32,139.99 L7.91,139.71 L7.67,139.38 L7.56,139.03 L7.51,138.66 L7.50,138.30 L7.51,137.94 L7.56,137.57 L7.67,137.22 L7.91,136.89 L8.32,136.61 L8.73,136.36 L8.99,136.10 L9.16,135.82 L9.29,135.53 L9.41,135.24 L9.53,134.95 L9.64,134.65 L9.72,134.34 L9.72,133.96 L9.61,133.49 L9.52,133.01 L9.58,132.61 L9.75,132.28 L9.98,131.99 L10.22,131.72 L10.49,131.48 L10.78,131.25 L11.11,131.08 L11.51,131.02 L11.99,131.11 L12.46,131.22 L12.84,131.22 L13.15,131.14 L13.45,131.03 L13.74,130.91 L14.03,130.79 L14.32,130.66 L14.60,130.49 L14.86,130.23 L15.11,129.82 L15.39,129.41 L15.72,129.17 L16.07,129.06 L16.44,129.01Z" fill="url(#st16)" stroke="#141414" stroke-width="0.6" stroke-opacity="0.8"/><circle cx="16.80" cy="138.30" r="1.8" fill="#1c1c1c"/><path d="M47.65,129.00 L48.01,129.01 L48.38,129.06 L48.73,129.17 L49.06,129.41 L49.34,129.82 L49.59,130.23 L49.85,130.49 L50.13,130.66 L50.42,130.79 L50.71,130.91 L51.00,131.03 L51.30,131.14 L51.61,131.22 L51.99,131.22 L52.46,131.11 L52.94,131.02 L53.34,131.08 L53.67,131.25 L53.96,131.48 L54.23,131.72 L54.47,131.99 L54.70,132.28 L54.87,132.61 L54.93,133.01 L54.84,133.49 L54.73,133.96 L54.73,134.34 L54.81,134.65 L54.92,134.95 L55.04,135.24 L55.16,135.53 L55.29,135.82 L55.46,136.10 L55.72,136.36 L56.13,136.61 L56.54,136.89 L56.78,137.22 L56.89,137.57 L56.94,137.94 L56.95,138.30 L56.94,138.66 L56.89,139.03 L56.78,139.38 L56.54,139.71 L56.13,139.99 L55.72,140.24 L55.46,140.50 L55.29,140.78 L55.16,141.07 L55.04,141.36 L54.92,141.65 L54.81,141.95 L54.73,142.26 L54.73,142.64 L54.84,143.11 L54.93,143.59 L54.87,143.99 L54.70,144.32 L54.47,144.61 L54.23,144.88 L53.96,145.12 L53.67,145.35 L53.34,145.52 L52.94,145.58 L52.46,145.49 L51.99,145.38 L51.61,145.38 L51.30,145.46 L51.00,145.57 L50.71,145.69 L50.42,145.81 L50.13,145.94 L49.85,146.11 L49.59,146.37 L49.34,146.78 L49.06,147.19 L48.73,147.43 L48.38,147.54 L48.01,147.59 L47.65,147.60 L47.29,147.59 L46.92,147.54 L46.57,147.43 L46.24,147.19 L45.96,146.78 L45.71,146.37 L45.45,146.11 L45.17,145.94 L44.88,145.81 L44.59,145.69 L44.30,145.57 L44.00,145.46 L43.69,145.38 L43.31,145.38 L42.84,145.49 L42.36,145.58 L41.96,145.52 L41.63,145.35 L41.34,145.12 L41.07,144.88 L40.83,144.61 L40.60,144.32 L40.43,143.99 L40.37,143.59 L40.46,143.11 L40.57,142.64 L40.57,142.26 L40.49,141.95 L40.38,141.65 L40.26,141.36 L40.14,141.07 L40.01,140.78 L39.84,140.50 L39.58,140.24 L39.17,139.99 L38.76,139.71 L38.52,139.38 L38.41,139.03 L38.36,138.66 L38.35,138.30 L38.36,137.94 L38.41,137.57 L38.52,137.22 L38.76,136.89 L39.17,136.61 L39.58,136.36 L39.84,136.10 L40.01,135.82 L40.14,135.53 L40.26,135.24 L40.38,134.95 L40.49,134.65 L40.57,134.34 L40.57,133.96 L40.46,133.49 L40.37,133.01 L40.43,132.61 L40.60,132.28 L40.83,131.99 L41.07,131.72 L41.34,131.48 L41.63,131.25 L41.96,131.08 L42.36,131.02 L42.84,131.11 L43.31,131.22 L43.69,131.22 L44.00,131.14 L44.30,131.03 L44.59,130.91 L44.88,130.79 L45.17,130.66 L45.45,130.49 L45.71,130.23 L45.96,129.82 L46.24,129.41 L46.57,129.17 L46.92,129.06 L47.29,129.01Z" fill="url(#st17)" stroke="#141414" stroke-width="0.6" stroke-opacity="0.8"/><circle cx="47.65" cy="138.30" r="1.8" fill="#1c1c1c"/><path d="M78.50,129.00 L78.86,129.01 L79.23,129.06 L79.58,129.17 L79.91,129.41 L80.19,129.82 L80.44,130.23 L80.70,130.49 L80.98,130.66 L81.27,130.79 L81.56,130.91 L81.85,131.03 L82.15,131.14 L82.46,131.22 L82.84,131.22 L83.31,131.11 L83.79,131.02 L84.19,131.08 L84.52,131.25 L84.81,131.48 L85.08,131.72 L85.32,131.99 L85.55,132.28 L85.72,132.61 L85.78,133.01 L85.69,133.49 L85.58,133.96 L85.58,134.34 L85.66,134.65 L85.77,134.95 L85.89,135.24 L86.01,135.53 L86.14,135.82 L86.31,136.10 L86.57,136.36 L86.98,136.61 L87.39,136.89 L87.63,137.22 L87.74,137.57 L87.79,137.94 L87.80,138.30 L87.79,138.66 L87.74,139.03 L87.63,139.38 L87.39,139.71 L86.98,139.99 L86.57,140.24 L86.31,140.50 L86.14,140.78 L86.01,141.07 L85.89,141.36 L85.77,141.65 L85.66,141.95 L85.58,142.26 L85.58,142.64 L85.69,143.11 L85.78,143.59 L85.72,143.99 L85.55,144.32 L85.32,144.61 L85.08,144.88 L84.81,145.12 L84.52,145.35 L84.19,145.52 L83.79,145.58 L83.31,145.49 L82.84,145.38 L82.46,145.38 L82.15,145.46 L81.85,145.57 L81.56,145.69 L81.27,145.81 L80.98,145.94 L80.70,146.11 L80.44,146.37 L80.19,146.78 L79.91,147.19 L79.58,147.43 L79.23,147.54 L78.86,147.59 L78.50,147.60 L78.14,147.59 L77.77,147.54 L77.42,147.43 L77.09,147.19 L76.81,146.78 L76.56,146.37 L76.30,146.11 L76.02,145.94 L75.73,145.81 L75.44,145.69 L75.15,145.57 L74.85,145.46 L74.54,145.38 L74.16,145.38 L73.69,145.49 L73.21,145.58 L72.81,145.52 L72.48,145.35 L72.19,145.12 L71.92,144.88 L71.68,144.61 L71.45,144.32 L71.28,143.99 L71.22,143.59 L71.31,143.11 L71.42,142.64 L71.42,142.26 L71.34,141.95 L71.23,141.65 L71.11,141.36 L70.99,141.07 L70.86,140.78 L70.69,140.50 L70.43,140.24 L70.02,139.99 L69.61,139.71 L69.37,139.38 L69.26,139.03 L69.21,138.66 L69.20,138.30 L69.21,137.94 L69.26,137.57 L69.37,137.22 L69.61,136.89 L70.02,136.61 L70.43,136.36 L70.69,136.10 L70.86,135.82 L70.99,135.53 L71.11,135.24 L71.23,134.95 L71.34,134.65 L71.42,134.34 L71.42,133.96 L71.31,133.49 L71.22,133.01 L71.28,132.61 L71.45,132.28 L71.68,131.99 L71.92,131.72 L72.19,131.48 L72.48,131.25 L72.81,131.08 L73.21,131.02 L73.69,131.11 L74.16,131.22 L74.54,131.22 L74.85,131.14 L75.15,131.03 L75.44,130.91 L75.73,130.79 L76.02,130.66 L76.30,130.49 L76.56,130.23 L76.81,129.82 L77.09,129.41 L77.42,129.17 L77.77,129.06 L78.14,129.01Z" fill="url(#st18)" stroke="#141414" stroke-width="0.6" stroke-opacity="0.8"/><circle cx="78.50" cy="138.30" r="1.8" fill="#1c1c1c"/><path d="M109.35,129.00 L109.71,129.01 L110.08,129.06 L110.43,129.17 L110.76,129.41 L111.04,129.82 L111.29,130.23 L111.55,130.49 L111.83,130.66 L112.12,130.79 L112.41,130.91 L112.70,131.03 L113.00,131.14 L113.31,131.22 L113.69,131.22 L114.16,131.11 L114.64,131.02 L115.04,131.08 L115.37,131.25 L115.66,131.48 L115.93,131.72 L116.17,131.99 L116.40,132.28 L116.57,132.61 L116.63,133.01 L116.54,133.49 L116.43,133.96 L116.43,134.34 L116.51,134.65 L116.62,134.95 L116.74,135.24 L116.86,135.53 L116.99,135.82 L117.16,136.10 L117.42,136.36 L117.83,136.61 L118.24,136.89 L118.48,137.22 L118.59,137.57 L118.64,137.94 L118.65,138.30 L118.64,138.66 L118.59,139.03 L118.48,139.38 L118.24,139.71 L117.83,139.99 L117.42,140.24 L117.16,140.50 L116.99,140.78 L116.86,141.07 L116.74,141.36 L116.62,141.65 L116.51,141.95 L116.43,142.26 L116.43,142.64 L116.54,143.11 L116.63,143.59 L116.57,143.99 L116.40,144.32 L116.17,144.61 L115.93,144.88 L115.66,145.12 L115.37,145.35 L115.04,145.52 L114.64,145.58 L114.16,145.49 L113.69,145.38 L113.31,145.38 L113.00,145.46 L112.70,145.57 L112.41,145.69 L112.12,145.81 L111.83,145.94 L111.55,146.11 L111.29,146.37 L111.04,146.78 L110.76,147.19 L110.43,147.43 L110.08,147.54 L109.71,147.59 L109.35,147.60 L108.99,147.59 L108.62,147.54 L108.27,147.43 L107.94,147.19 L107.66,146.78 L107.41,146.37 L107.15,146.11 L106.87,145.94 L106.58,145.81 L106.29,145.69 L106.00,145.57 L105.70,145.46 L105.39,145.38 L105.01,145.38 L104.54,145.49 L104.06,145.58 L103.66,145.52 L103.33,145.35 L103.04,145.12 L102.77,144.88 L102.53,144.61 L102.30,144.32 L102.13,143.99 L102.07,143.59 L102.16,143.11 L102.27,142.64 L102.27,142.26 L102.19,141.95 L102.08,141.65 L101.96,141.36 L101.84,141.07 L101.71,140.78 L101.54,140.50 L101.28,140.24 L100.87,139.99 L100.46,139.71 L100.22,139.38 L100.11,139.03 L100.06,138.66 L100.05,138.30 L100.06,137.94 L100.11,137.57 L100.22,137.22 L100.46,136.89 L100.87,136.61 L101.28,136.36 L101.54,136.10 L101.71,135.82 L101.84,135.53 L101.96,135.24 L102.08,134.95 L102.19,134.65 L102.27,134.34 L102.27,133.96 L102.16,133.49 L102.07,133.01 L102.13,132.61 L102.30,132.28 L102.53,131.99 L102.77,131.72 L103.04,131.48 L103.33,131.25 L103.66,131.08 L104.06,131.02 L104.54,131.11 L105.01,131.22 L105.39,131.22 L105.70,131.14 L106.00,131.03 L106.29,130.91 L106.58,130.79 L106.87,130.66 L107.15,130.49 L107.41,130.23 L107.66,129.82 L107.94,129.41 L108.27,129.17 L108.62,129.06 L108.99,129.01Z" fill="url(#st19)" stroke="#141414" stroke-width="0.6" stroke-opacity="0.8"/><circle cx="109.35" cy="138.30" r="1.8" fill="#1c1c1c"/></svg>
<div class="t" style="left:633.90px;top:215.67px;font-size:6.69px;color:#f6f6f6;font-weight:bold;transform:scaleX(0.826);transform-origin:0 0;text-shadow:0 0 1px #000,0 0 1.2px #000,0 0 1.2px #000">Style 1</div>
<div class="t" style="left:664.75px;top:215.67px;font-size:6.69px;color:#f6f6f6;font-weight:bold;transform:scaleX(0.826);transform-origin:0 0;text-shadow:0 0 1px #000,0 0 1.2px #000,0 0 1.2px #000">Style 2</div>
<div class="t" style="left:695.60px;top:215.67px;font-size:6.69px;color:#f6f6f6;font-weight:bold;transform:scaleX(0.826);transform-origin:0 0;text-shadow:0 0 1px #000,0 0 1.2px #000,0 0 1.2px #000">Style 3</div>
<div class="t" style="left:726.45px;top:215.67px;font-size:6.69px;color:#f6f6f6;font-weight:bold;transform:scaleX(0.826);transform-origin:0 0;text-shadow:0 0 1px #000,0 0 1.2px #000,0 0 1.2px #000">Style 4</div>
<div class="t" style="left:633.90px;top:246.52px;font-size:6.69px;color:#f6f6f6;font-weight:bold;transform:scaleX(0.826);transform-origin:0 0;text-shadow:0 0 1px #000,0 0 1.2px #000,0 0 1.2px #000">Style 5</div>
<div class="t" style="left:664.75px;top:246.52px;font-size:6.69px;color:#f6f6f6;font-weight:bold;transform:scaleX(0.826);transform-origin:0 0;text-shadow:0 0 1px #000,0 0 1.2px #000,0 0 1.2px #000">Style 6</div>
<div class="t" style="left:695.60px;top:246.52px;font-size:6.69px;color:#f6f6f6;font-weight:bold;transform:scaleX(0.826);transform-origin:0 0;text-shadow:0 0 1px #000,0 0 1.2px #000,0 0 1.2px #000">Style 7</div>
<div class="t" style="left:726.45px;top:246.52px;font-size:6.69px;color:#f6f6f6;font-weight:bold;transform:scaleX(0.826);transform-origin:0 0;text-shadow:0 0 1px #000,0 0 1.2px #000,0 0 1.2px #000">Style 8</div>
<div class="t" style="left:633.90px;top:277.37px;font-size:6.69px;color:#f6f6f6;font-weight:bold;transform:scaleX(0.826);transform-origin:0 0;text-shadow:0 0 1px #000,0 0 1.2px #000,0 0 1.2px #000">Style 9</div>
<div class="t" style="left:663.65px;top:277.37px;font-size:6.69px;color:#f6f6f6;font-weight:bold;transform:scaleX(0.791);transform-origin:0 0;text-shadow:0 0 1px #000,0 0 1.2px #000,0 0 1.2px #000">Style 10</div>
<div class="t" style="left:694.50px;top:277.37px;font-size:6.69px;color:#f6f6f6;font-weight:bold;transform:scaleX(0.803);transform-origin:0 0;text-shadow:0 0 1px #000,0 0 1.2px #000,0 0 1.2px #000">Style 11</div>
<div class="t" style="left:725.35px;top:277.37px;font-size:6.69px;color:#f6f6f6;font-weight:bold;transform:scaleX(0.791);transform-origin:0 0;text-shadow:0 0 1px #000,0 0 1.2px #000,0 0 1.2px #000">Style 12</div>
<div class="t" style="left:632.80px;top:308.22px;font-size:6.69px;color:#f6f6f6;font-weight:bold;transform:scaleX(0.791);transform-origin:0 0;text-shadow:0 0 1px #000,0 0 1.2px #000,0 0 1.2px #000">Style 13</div>
<div class="t" style="left:663.65px;top:308.22px;font-size:6.69px;color:#f6f6f6;font-weight:bold;transform:scaleX(0.791);transform-origin:0 0;text-shadow:0 0 1px #000,0 0 1.2px #000,0 0 1.2px #000">Style 14</div>
<div class="t" style="left:694.50px;top:308.22px;font-size:6.69px;color:#f6f6f6;font-weight:bold;transform:scaleX(0.791);transform-origin:0 0;text-shadow:0 0 1px #000,0 0 1.2px #000,0 0 1.2px #000">Style 15</div>
<div class="t" style="left:725.35px;top:308.22px;font-size:6.69px;color:#f6f6f6;font-weight:bold;transform:scaleX(0.791);transform-origin:0 0;text-shadow:0 0 1px #000,0 0 1.2px #000,0 0 1.2px #000">Style 16</div>
<div class="t" style="left:632.80px;top:339.07px;font-size:6.69px;color:#f6f6f6;font-weight:bold;transform:scaleX(0.791);transform-origin:0 0;text-shadow:0 0 1px #000,0 0 1.2px #000,0 0 1.2px #000">Style 17</div>
<div class="t" style="left:663.65px;top:339.07px;font-size:6.69px;color:#f6f6f6;font-weight:bold;transform:scaleX(0.791);transform-origin:0 0;text-shadow:0 0 1px #000,0 0 1.2px #000,0 0 1.2px #000">Style 18</div>
<div class="t" style="left:694.50px;top:339.07px;font-size:6.69px;color:#f6f6f6;font-weight:bold;transform:scaleX(0.791);transform-origin:0 0;text-shadow:0 0 1px #000,0 0 1.2px #000,0 0 1.2px #000">Style 19</div>
<div class="t" style="left:725.35px;top:339.07px;font-size:6.69px;color:#f6f6f6;font-weight:bold;transform:scaleX(0.791);transform-origin:0 0;text-shadow:0 0 1px #000,0 0 1.2px #000,0 0 1.2px #000">Style 20</div>
<div class="a" style="left:628.8px;top:353.4px;width:129px;height:11px;background:#2a2a2a;border:1px solid #3e3e3e;border-radius:1.5px"></div>
<svg class="a" style="left:631px;top:355px" width="8" height="8"><circle cx="3.6" cy="3.4" r="1.8" fill="none" stroke="#ddd" stroke-width="0.9"/><path d="M4.9 4.7 L6.6 6.4" stroke="#ddd" stroke-width="1"/></svg>
<div class="a" style="left:626.4px;top:366.7px;width:167.6px;height:10.9px;background:#2b2b2b"></div>
<div class="a" style="left:628.5px;top:367.8px;width:7.5px;height:9.8px;background:#262626"></div>
<div class="a" style="left:636.8px;top:367.8px;width:26.4px;height:9.8px;background:#3a3a3a"></div>
<div class="t" style="left:638.00px;top:369.90px;font-size:6.40px;color:#f2f2f2;font-weight:bold;transform:scaleX(0.767);transform-origin:0 0">Transform</div>
<div class="t" style="left:666.00px;top:369.90px;font-size:6.40px;color:#7a7a7a;font-weight:bold;transform:scaleX(0.794);transform-origin:0 0">History</div>
<div class="a" style="left:685.2px;top:370.2px;width:0.5px;height:5.4px;background:#4c4c4c"></div>
<div class="t" style="left:687.60px;top:369.90px;font-size:6.40px;color:#7a7a7a;font-weight:bold;transform:scaleX(0.793);transform-origin:0 0">Navigator</div>
<div class="a" style="left:712.9px;top:370.2px;width:0.5px;height:5.4px;background:#4c4c4c"></div>
<div class="t" style="left:715.20px;top:369.90px;font-size:6.40px;color:#7a7a7a;font-weight:bold;transform:scaleX(0.823);transform-origin:0 0">32-bit Preview</div>
<div class="a" style="left:626.4px;top:377.6px;width:167.6px;height:49px;background:#3a3a3a"></div>
<svg class="a" style="left:634px;top:386px" width="22" height="22"><rect x="2.5" y="2.5" width="16" height="16" fill="#666"/><circle cx="2.5" cy="2.5" r="1" fill="#888"/><circle cx="2.5" cy="10.5" r="1" fill="#888"/><circle cx="2.5" cy="18.5" r="1" fill="#888"/><circle cx="10.5" cy="2.5" r="1" fill="#888"/><circle cx="10.5" cy="18.5" r="1" fill="#888"/><circle cx="18.5" cy="2.5" r="1" fill="#888"/><circle cx="18.5" cy="10.5" r="1" fill="#888"/><circle cx="18.5" cy="18.5" r="1" fill="#888"/><circle cx="10.5" cy="10.5" r="1.1" fill="#555"/></svg>
<div class="a" style="left:670px;top:383.3px;width:29.5px;height:8.6px;background:#2c2c2c;border-radius:1.5px"></div><div class="t" style="left:663.00px;top:385.30px;font-size:6.40px;color:#eeeeee;font-weight:bold">X:</div><div class="t" style="left:672.00px;top:385.32px;font-size:6.25px;color:#8c8c8c;font-weight:normal">0 px</div>
<div class="a" style="left:670px;top:394.2px;width:29.5px;height:8.8px;background:#2c2c2c;border-radius:1.5px"></div><div class="t" style="left:663.00px;top:396.40px;font-size:6.40px;color:#eeeeee;font-weight:bold">Y:</div><div class="t" style="left:672.00px;top:396.42px;font-size:6.25px;color:#8c8c8c;font-weight:normal">0 px</div>
<div class="a" style="left:670px;top:410.6px;width:29.5px;height:8.6px;background:#2c2c2c;border-radius:1.5px"></div><div class="t" style="left:663.00px;top:412.60px;font-size:6.40px;color:#eeeeee;font-weight:bold">R:</div><div class="t" style="left:672.00px;top:412.62px;font-size:6.25px;color:#8c8c8c;font-weight:normal">0 °</div><svg class="a" style="left:695.0px;top:413.1px" width="4" height="4"><path d="M0.4 1 H3.4 L1.9 2.8Z" fill="#aaa"/></svg>
<div class="a" style="left:712px;top:383.3px;width:29.5px;height:8.6px;background:#2c2c2c;border-radius:1.5px"></div><div class="t" style="left:703.80px;top:385.30px;font-size:6.40px;color:#eeeeee;font-weight:bold">W:</div><div class="t" style="left:714.00px;top:385.32px;font-size:6.25px;color:#8c8c8c;font-weight:normal">0 px</div>
<div class="a" style="left:712px;top:394.2px;width:29.5px;height:8.8px;background:#2c2c2c;border-radius:1.5px"></div><div class="t" style="left:704.20px;top:396.40px;font-size:6.40px;color:#eeeeee;font-weight:bold">H:</div><div class="t" style="left:714.00px;top:396.42px;font-size:6.25px;color:#8c8c8c;font-weight:normal">0 px</div>
<div class="a" style="left:712px;top:410.6px;width:29.5px;height:8.6px;background:#2c2c2c;border-radius:1.5px"></div><div class="t" style="left:704.50px;top:412.60px;font-size:6.40px;color:#eeeeee;font-weight:bold">S:</div><div class="t" style="left:714.00px;top:412.62px;font-size:6.25px;color:#8c8c8c;font-weight:normal">0 °</div><svg class="a" style="left:737.0px;top:413.1px" width="4" height="4"><path d="M0.4 1 H3.4 L1.9 2.8Z" fill="#aaa"/></svg>
<svg class="a" style="left:746.5px;top:387.5px" width="4" height="11"><rect x="0.6" y="0.6" width="2.6" height="9.6" rx="1.2" fill="#6a6a6a" stroke="#9a9a9a" stroke-width="0.6"/><path d="M1.9 2.5 V8.5" stroke="#c8c8c8" stroke-width="0.7"/></svg>
<svg class="a" style="left:20px;top:55px" width="606" height="10"><rect x="11.60" y="8.1" width="0.8" height="1.9" fill="#b8b8b8"/><rect x="14.23" y="8.1" width="0.8" height="1.9" fill="#b8b8b8"/><rect x="16.86" y="8.1" width="0.8" height="1.9" fill="#b8b8b8"/><rect x="19.48" y="8.1" width="0.8" height="1.9" fill="#b8b8b8"/><rect x="22.06" y="6" width="0.9" height="4" fill="#d0d0d0"/><rect x="24.74" y="8.1" width="0.8" height="1.9" fill="#b8b8b8"/><rect x="27.36" y="8.1" width="0.8" height="1.9" fill="#b8b8b8"/><rect x="29.99" y="8.1" width="0.8" height="1.9" fill="#b8b8b8"/><rect x="32.62" y="8.1" width="0.8" height="1.9" fill="#b8b8b8"/><rect x="35.24" y="7" width="0.8" height="3" fill="#c0c0c0"/><rect x="37.87" y="8.1" width="0.8" height="1.9" fill="#b8b8b8"/><rect x="40.50" y="8.1" width="0.8" height="1.9" fill="#b8b8b8"/><rect x="43.13" y="8.1" width="0.8" height="1.9" fill="#b8b8b8"/><rect x="45.75" y="8.1" width="0.8" height="1.9" fill="#b8b8b8"/><rect x="48.33" y="6" width="0.9" height="4" fill="#d0d0d0"/><rect x="51.01" y="8.1" width="0.8" height="1.9" fill="#b8b8b8"/><rect x="53.63" y="8.1" width="0.8" height="1.9" fill="#b8b8b8"/><rect x="56.26" y="8.1" width="0.8" height="1.9" fill="#b8b8b8"/><rect x="58.89" y="8.1" width="0.8" height="1.9" fill="#b8b8b8"/><rect x="61.51" y="7" width="0.8" height="3" fill="#c0c0c0"/><rect x="64.14" y="8.1" width="0.8" height="1.9" fill="#b8b8b8"/><rect x="66.77" y="8.1" width="0.8" height="1.9" fill="#b8b8b8"/><rect x="69.40" y="8.1" width="0.8" height="1.9" fill="#b8b8b8"/><rect x="72.02" y="8.1" width="0.8" height="1.9" fill="#b8b8b8"/><rect x="74.60" y="6" width="0.9" height="4" fill="#d0d0d0"/><rect x="77.28" y="8.1" width="0.8" height="1.9" fill="#b8b8b8"/><rect x="79.90" y="8.1" width="0.8" height="1.9" fill="#b8b8b8"/><rect x="82.53" y="8.1" width="0.8" height="1.9" fill="#b8b8b8"/><rect x="85.16" y="8.1" width="0.8" height="1.9" fill="#b8b8b8"/><rect x="87.79" y="7" width="0.8" height="3" fill="#c0c0c0"/><rect x="90.41" y="8.1" width="0.8" height="1.9" fill="#b8b8b8"/><rect x="93.04" y="8.1" width="0.8" height="1.9" fill="#b8b8b8"/><rect x="95.67" y="8.1" width="0.8" height="1.9" fill="#b8b8b8"/><rect x="98.29" y="8.1" width="0.8" height="1.9" fill="#b8b8b8"/><rect x="100.87" y="6" width="0.9" height="4" fill="#d0d0d0"/><rect x="103.55" y="8.1" width="0.8" height="1.9" fill="#b8b8b8"/><rect x="106.17" y="8.1" width="0.8" height="1.9" fill="#b8b8b8"/><rect x="108.80" y="8.1" width="0.8" height="1.9" fill="#b8b8b8"/><rect x="111.43" y="8.1" width="0.8" height="1.9" fill="#b8b8b8"/><rect x="114.06" y="7" width="0.8" height="3" fill="#c0c0c0"/><rect x="116.68" y="8.1" width="0.8" height="1.9" fill="#b8b8b8"/><rect x="119.31" y="8.1" width="0.8" height="1.9" fill="#b8b8b8"/><rect x="121.94" y="8.1" width="0.8" height="1.9" fill="#b8b8b8"/><rect x="124.56" y="8.1" width="0.8" height="1.9" fill="#b8b8b8"/><rect x="127.14" y="6" width="0.9" height="4" fill="#d0d0d0"/><rect x="129.82" y="8.1" width="0.8" height="1.9" fill="#b8b8b8"/><rect x="132.44" y="8.1" width="0.8" height="1.9" fill="#b8b8b8"/><rect x="135.07" y="8.1" width="0.8" height="1.9" fill="#b8b8b8"/><rect x="137.70" y="8.1" width="0.8" height="1.9" fill="#b8b8b8"/><rect x="140.33" y="7" width="0.8" height="3" fill="#c0c0c0"/><rect x="142.95" y="8.1" width="0.8" height="1.9" fill="#b8b8b8"/><rect x="145.58" y="8.1" width="0.8" height="1.9" fill="#b8b8b8"/><rect x="148.21" y="8.1" width="0.8" height="1.9" fill="#b8b8b8"/><rect x="150.83" y="8.1" width="0.8" height="1.9" fill="#b8b8b8"/><rect x="153.41" y="6" width="0.9" height="4" fill="#d0d0d0"/><rect x="156.09" y="8.1" width="0.8" height="1.9" fill="#b8b8b8"/><rect x="158.71" y="8.1" width="0.8" height="1.9" fill="#b8b8b8"/><rect x="161.34" y="8.1" width="0.8" height="1.9" fill="#b8b8b8"/><rect x="163.97" y="8.1" width="0.8" height="1.9" fill="#b8b8b8"/><rect x="166.59" y="7" width="0.8" height="3" fill="#c0c0c0"/><rect x="169.22" y="8.1" width="0.8" height="1.9" fill="#b8b8b8"/><rect x="171.85" y="8.1" width="0.8" height="1.9" fill="#b8b8b8"/><rect x="174.48" y="8.1" width="0.8" height="1.9" fill="#b8b8b8"/><rect x="177.10" y="8.1" width="0.8" height="1.9" fill="#b8b8b8"/><rect x="179.68" y="6" width="0.9" height="4" fill="#d0d0d0"/><rect x="182.36" y="8.1" width="0.8" height="1.9" fill="#b8b8b8"/><rect x="184.98" y="8.1" width="0.8" height="1.9" fill="#b8b8b8"/><rect x="187.61" y="8.1" width="0.8" height="1.9" fill="#b8b8b8"/><rect x="190.24" y="8.1" width="0.8" height="1.9" fill="#b8b8b8"/><rect x="192.86" y="7" width="0.8" height="3" fill="#c0c0c0"/><rect x="195.49" y="8.1" width="0.8" height="1.9" fill="#b8b8b8"/><rect x="198.12" y="8.1" width="0.8" height="1.9" fill="#b8b8b8"/><rect x="200.75" y="8.1" width="0.8" height="1.9" fill="#b8b8b8"/><rect x="203.37" y="8.1" width="0.8" height="1.9" fill="#b8b8b8"/><rect x="205.95" y="6" width="0.9" height="4" fill="#d0d0d0"/><rect x="208.63" y="8.1" width="0.8" height="1.9" fill="#b8b8b8"/><rect x="211.25" y="8.1" width="0.8" height="1.9" fill="#b8b8b8"/><rect x="213.88" y="8.1" width="0.8" height="1.9" fill="#b8b8b8"/><rect x="216.51" y="8.1" width="0.8" height="1.9" fill="#b8b8b8"/><rect x="219.13" y="7" width="0.8" height="3" fill="#c0c0c0"/><rect x="221.76" y="8.1" width="0.8" height="1.9" fill="#b8b8b8"/><rect x="224.39" y="8.1" width="0.8" height="1.9" fill="#b8b8b8"/><rect x="227.02" y="8.1" width="0.8" height="1.9" fill="#b8b8b8"/><rect x="229.64" y="8.1" width="0.8" height="1.9" fill="#b8b8b8"/><rect x="232.22" y="6" width="0.9" height="4" fill="#d0d0d0"/><rect x="234.90" y="8.1" width="0.8" height="1.9" fill="#b8b8b8"/><rect x="237.52" y="8.1" width="0.8" height="1.9" fill="#b8b8b8"/><rect x="240.15" y="8.1" width="0.8" height="1.9" fill="#b8b8b8"/><rect x="242.78" y="8.1" width="0.8" height="1.9" fill="#b8b8b8"/><rect x="245.41" y="7" width="0.8" height="3" fill="#c0c0c0"/><rect x="248.03" y="8.1" width="0.8" height="1.9" fill="#b8b8b8"/><rect x="250.66" y="8.1" width="0.8" height="1.9" fill="#b8b8b8"/><rect x="253.29" y="8.1" width="0.8" height="1.9" fill="#b8b8b8"/><rect x="255.91" y="8.1" width="0.8" height="1.9" fill="#b8b8b8"/><rect x="258.49" y="6" width="0.9" height="4" fill="#d0d0d0"/><rect x="261.17" y="8.1" width="0.8" height="1.9" fill="#b8b8b8"/><rect x="263.79" y="8.1" width="0.8" height="1.9" fill="#b8b8b8"/><rect x="266.42" y="8.1" width="0.8" height="1.9" fill="#b8b8b8"/><rect x="269.05" y="8.1" width="0.8" height="1.9" fill="#b8b8b8"/><rect x="271.67" y="7" width="0.8" height="3" fill="#c0c0c0"/><rect x="274.30" y="8.1" width="0.8" height="1.9" fill="#b8b8b8"/><rect x="276.93" y="8.1" width="0.8" height="1.9" fill="#b8b8b8"/><rect x="279.56" y="8.1" width="0.8" height="1.9" fill="#b8b8b8"/><rect x="282.18" y="8.1" width="0.8" height="1.9" fill="#b8b8b8"/><rect x="284.76" y="6" width="0.9" height="4" fill="#d0d0d0"/><rect x="287.44" y="8.1" width="0.8" height="1.9" fill="#b8b8b8"/><rect x="290.06" y="8.1" width="0.8" height="1.9" fill="#b8b8b8"/><rect x="292.69" y="8.1" width="0.8" height="1.9" fill="#b8b8b8"/><rect x="295.32" y="8.1" width="0.8" height="1.9" fill="#b8b8b8"/><rect x="297.94" y="7" width="0.8" height="3" fill="#c0c0c0"/><rect x="300.57" y="8.1" width="0.8" height="1.9" fill="#b8b8b8"/><rect x="303.20" y="8.1" width="0.8" height="1.9" fill="#b8b8b8"/><rect x="305.83" y="8.1" width="0.8" height="1.9" fill="#b8b8b8"/><rect x="308.45" y="8.1" width="0.8" height="1.9" fill="#b8b8b8"/><rect x="311.03" y="6" width="0.9" height="4" fill="#d0d0d0"/><rect x="313.71" y="8.1" width="0.8" height="1.9" fill="#b8b8b8"/><rect x="316.33" y="8.1" width="0.8" height="1.9" fill="#b8b8b8"/><rect x="318.96" y="8.1" width="0.8" height="1.9" fill="#b8b8b8"/><rect x="321.59" y="8.1" width="0.8" height="1.9" fill="#b8b8b8"/><rect x="324.21" y="7" width="0.8" height="3" fill="#c0c0c0"/><rect x="326.84" y="8.1" width="0.8" height="1.9" fill="#b8b8b8"/><rect x="329.47" y="8.1" width="0.8" height="1.9" fill="#b8b8b8"/><rect x="332.10" y="8.1" width="0.8" height="1.9" fill="#b8b8b8"/><rect x="334.72" y="8.1" width="0.8" height="1.9" fill="#b8b8b8"/><rect x="337.30" y="6" width="0.9" height="4" fill="#d0d0d0"/><rect x="339.98" y="8.1" width="0.8" height="1.9" fill="#b8b8b8"/><rect x="342.60" y="8.1" width="0.8" height="1.9" fill="#b8b8b8"/><rect x="345.23" y="8.1" width="0.8" height="1.9" fill="#b8b8b8"/><rect x="347.86" y="8.1" width="0.8" height="1.9" fill="#b8b8b8"/><rect x="350.48" y="7" width="0.8" height="3" fill="#c0c0c0"/><rect x="353.11" y="8.1" width="0.8" height="1.9" fill="#b8b8b8"/><rect x="355.74" y="8.1" width="0.8" height="1.9" fill="#b8b8b8"/><rect x="358.37" y="8.1" width="0.8" height="1.9" fill="#b8b8b8"/><rect x="360.99" y="8.1" width="0.8" height="1.9" fill="#b8b8b8"/><rect x="363.57" y="6" width="0.9" height="4" fill="#d0d0d0"/><rect x="366.25" y="8.1" width="0.8" height="1.9" fill="#b8b8b8"/><rect x="368.87" y="8.1" width="0.8" height="1.9" fill="#b8b8b8"/><rect x="371.50" y="8.1" width="0.8" height="1.9" fill="#b8b8b8"/><rect x="374.13" y="8.1" width="0.8" height="1.9" fill="#b8b8b8"/><rect x="376.75" y="7" width="0.8" height="3" fill="#c0c0c0"/><rect x="379.38" y="8.1" width="0.8" height="1.9" fill="#b8b8b8"/><rect x="382.01" y="8.1" width="0.8" height="1.9" fill="#b8b8b8"/><rect x="384.64" y="8.1" width="0.8" height="1.9" fill="#b8b8b8"/><rect x="387.26" y="8.1" width="0.8" height="1.9" fill="#b8b8b8"/><rect x="389.84" y="6" width="0.9" height="4" fill="#d0d0d0"/><rect x="392.52" y="8.1" width="0.8" height="1.9" fill="#b8b8b8"/><rect x="395.14" y="8.1" width="0.8" height="1.9" fill="#b8b8b8"/><rect x="397.77" y="8.1" width="0.8" height="1.9" fill="#b8b8b8"/><rect x="400.40" y="8.1" width="0.8" height="1.9" fill="#b8b8b8"/><rect x="403.02" y="7" width="0.8" height="3" fill="#c0c0c0"/><rect x="405.65" y="8.1" width="0.8" height="1.9" fill="#b8b8b8"/><rect x="408.28" y="8.1" width="0.8" height="1.9" fill="#b8b8b8"/><rect x="410.91" y="8.1" width="0.8" height="1.9" fill="#b8b8b8"/><rect x="413.53" y="8.1" width="0.8" height="1.9" fill="#b8b8b8"/><rect x="416.11" y="6" width="0.9" height="4" fill="#d0d0d0"/><rect x="418.79" y="8.1" width="0.8" height="1.9" fill="#b8b8b8"/><rect x="421.41" y="8.1" width="0.8" height="1.9" fill="#b8b8b8"/><rect x="424.04" y="8.1" width="0.8" height="1.9" fill="#b8b8b8"/><rect x="426.67" y="8.1" width="0.8" height="1.9" fill="#b8b8b8"/><rect x="429.29" y="7" width="0.8" height="3" fill="#c0c0c0"/><rect x="431.92" y="8.1" width="0.8" height="1.9" fill="#b8b8b8"/><rect x="434.55" y="8.1" width="0.8" height="1.9" fill="#b8b8b8"/><rect x="437.18" y="8.1" width="0.8" height="1.9" fill="#b8b8b8"/><rect x="439.80" y="8.1" width="0.8" height="1.9" fill="#b8b8b8"/><rect x="442.38" y="6" width="0.9" height="4" fill="#d0d0d0"/><rect x="445.06" y="8.1" width="0.8" height="1.9" fill="#b8b8b8"/><rect x="447.68" y="8.1" width="0.8" height="1.9" fill="#b8b8b8"/><rect x="450.31" y="8.1" width="0.8" height="1.9" fill="#b8b8b8"/><rect x="452.94" y="8.1" width="0.8" height="1.9" fill="#b8b8b8"/><rect x="455.56" y="7" width="0.8" height="3" fill="#c0c0c0"/><rect x="458.19" y="8.1" width="0.8" height="1.9" fill="#b8b8b8"/><rect x="460.82" y="8.1" width="0.8" height="1.9" fill="#b8b8b8"/><rect x="463.45" y="8.1" width="0.8" height="1.9" fill="#b8b8b8"/><rect x="466.07" y="8.1" width="0.8" height="1.9" fill="#b8b8b8"/><rect x="468.65" y="6" width="0.9" height="4" fill="#d0d0d0"/><rect x="471.33" y="8.1" width="0.8" height="1.9" fill="#b8b8b8"/><rect x="473.95" y="8.1" width="0.8" height="1.9" fill="#b8b8b8"/><rect x="476.58" y="8.1" width="0.8" height="1.9" fill="#b8b8b8"/><rect x="479.21" y="8.1" width="0.8" height="1.9" fill="#b8b8b8"/><rect x="481.83" y="7" width="0.8" height="3" fill="#c0c0c0"/><rect x="484.46" y="8.1" width="0.8" height="1.9" fill="#b8b8b8"/><rect x="487.09" y="8.1" width="0.8" height="1.9" fill="#b8b8b8"/><rect x="489.72" y="8.1" width="0.8" height="1.9" fill="#b8b8b8"/><rect x="492.34" y="8.1" width="0.8" height="1.9" fill="#b8b8b8"/><rect x="494.92" y="6" width="0.9" height="4" fill="#d0d0d0"/><rect x="497.60" y="8.1" width="0.8" height="1.9" fill="#b8b8b8"/><rect x="500.22" y="8.1" width="0.8" height="1.9" fill="#b8b8b8"/><rect x="502.85" y="8.1" width="0.8" height="1.9" fill="#b8b8b8"/><rect x="505.48" y="8.1" width="0.8" height="1.9" fill="#b8b8b8"/><rect x="508.10" y="7" width="0.8" height="3" fill="#c0c0c0"/><rect x="510.73" y="8.1" width="0.8" height="1.9" fill="#b8b8b8"/><rect x="513.36" y="8.1" width="0.8" height="1.9" fill="#b8b8b8"/><rect x="515.99" y="8.1" width="0.8" height="1.9" fill="#b8b8b8"/><rect x="518.61" y="8.1" width="0.8" height="1.9" fill="#b8b8b8"/><rect x="521.19" y="6" width="0.9" height="4" fill="#d0d0d0"/><rect x="523.87" y="8.1" width="0.8" height="1.9" fill="#b8b8b8"/><rect x="526.49" y="8.1" width="0.8" height="1.9" fill="#b8b8b8"/><rect x="529.12" y="8.1" width="0.8" height="1.9" fill="#b8b8b8"/><rect x="531.75" y="8.1" width="0.8" height="1.9" fill="#b8b8b8"/><rect x="534.37" y="7" width="0.8" height="3" fill="#c0c0c0"/><rect x="537.00" y="8.1" width="0.8" height="1.9" fill="#b8b8b8"/><rect x="539.63" y="8.1" width="0.8" height="1.9" fill="#b8b8b8"/><rect x="542.26" y="8.1" width="0.8" height="1.9" fill="#b8b8b8"/><rect x="544.88" y="8.1" width="0.8" height="1.9" fill="#b8b8b8"/><rect x="547.46" y="6" width="0.9" height="4" fill="#d0d0d0"/><rect x="550.14" y="8.1" width="0.8" height="1.9" fill="#b8b8b8"/><rect x="552.76" y="8.1" width="0.8" height="1.9" fill="#b8b8b8"/><rect x="555.39" y="8.1" width="0.8" height="1.9" fill="#b8b8b8"/><rect x="558.02" y="8.1" width="0.8" height="1.9" fill="#b8b8b8"/><rect x="560.64" y="7" width="0.8" height="3" fill="#c0c0c0"/><rect x="563.27" y="8.1" width="0.8" height="1.9" fill="#b8b8b8"/><rect x="565.90" y="8.1" width="0.8" height="1.9" fill="#b8b8b8"/><rect x="568.53" y="8.1" width="0.8" height="1.9" fill="#b8b8b8"/><rect x="571.15" y="8.1" width="0.8" height="1.9" fill="#b8b8b8"/><rect x="573.73" y="6" width="0.9" height="4" fill="#d0d0d0"/><rect x="576.41" y="8.1" width="0.8" height="1.9" fill="#b8b8b8"/><rect x="579.03" y="8.1" width="0.8" height="1.9" fill="#b8b8b8"/><rect x="581.66" y="8.1" width="0.8" height="1.9" fill="#b8b8b8"/><rect x="584.29" y="8.1" width="0.8" height="1.9" fill="#b8b8b8"/><rect x="586.91" y="7" width="0.8" height="3" fill="#c0c0c0"/><rect x="589.54" y="8.1" width="0.8" height="1.9" fill="#b8b8b8"/><rect x="592.17" y="8.1" width="0.8" height="1.9" fill="#b8b8b8"/><rect x="594.80" y="8.1" width="0.8" height="1.9" fill="#b8b8b8"/><rect x="597.42" y="8.1" width="0.8" height="1.9" fill="#b8b8b8"/><rect x="600.00" y="6" width="0.9" height="4" fill="#d0d0d0"/><rect x="602.68" y="8.1" width="0.8" height="1.9" fill="#b8b8b8"/><rect x="605.30" y="8.1" width="0.8" height="1.9" fill="#b8b8b8"/><text x="22.46" y="5.2" font-size="5.3" fill="#d0d0d0" text-anchor="middle" font-weight="bold" font-family="Liberation Sans">-200</text><text x="48.73" y="5.2" font-size="5.3" fill="#d0d0d0" text-anchor="middle" font-weight="bold" font-family="Liberation Sans">-100</text><text x="75.00" y="5.2" font-size="5.3" fill="#d0d0d0" text-anchor="middle" font-weight="bold" font-family="Liberation Sans">0</text><text x="101.27" y="5.2" font-size="5.3" fill="#d0d0d0" text-anchor="middle" font-weight="bold" font-family="Liberation Sans">100</text><text x="127.54" y="5.2" font-size="5.3" fill="#d0d0d0" text-anchor="middle" font-weight="bold" font-family="Liberation Sans">200</text><text x="153.81" y="5.2" font-size="5.3" fill="#d0d0d0" text-anchor="middle" font-weight="bold" font-family="Liberation Sans">300</text><text x="180.08" y="5.2" font-size="5.3" fill="#d0d0d0" text-anchor="middle" font-weight="bold" font-family="Liberation Sans">400</text><text x="206.35" y="5.2" font-size="5.3" fill="#d0d0d0" text-anchor="middle" font-weight="bold" font-family="Liberation Sans">500</text><text x="232.62" y="5.2" font-size="5.3" fill="#d0d0d0" text-anchor="middle" font-weight="bold" font-family="Liberation Sans">600</text><text x="258.89" y="5.2" font-size="5.3" fill="#d0d0d0" text-anchor="middle" font-weight="bold" font-family="Liberation Sans">700</text><text x="285.16" y="5.2" font-size="5.3" fill="#d0d0d0" text-anchor="middle" font-weight="bold" font-family="Liberation Sans">800</text><text x="311.43" y="5.2" font-size="5.3" fill="#d0d0d0" text-anchor="middle" font-weight="bold" font-family="Liberation Sans">900</text><text x="337.70" y="5.2" font-size="5.3" fill="#d0d0d0" text-anchor="middle" font-weight="bold" font-family="Liberation Sans">1000</text><text x="363.97" y="5.2" font-size="5.3" fill="#d0d0d0" text-anchor="middle" font-weight="bold" font-family="Liberation Sans">1100</text><text x="390.24" y="5.2" font-size="5.3" fill="#d0d0d0" text-anchor="middle" font-weight="bold" font-family="Liberation Sans">1200</text><text x="416.51" y="5.2" font-size="5.3" fill="#d0d0d0" text-anchor="middle" font-weight="bold" font-family="Liberation Sans">1300</text><text x="442.78" y="5.2" font-size="5.3" fill="#d0d0d0" text-anchor="middle" font-weight="bold" font-family="Liberation Sans">1400</text><text x="469.05" y="5.2" font-size="5.3" fill="#d0d0d0" text-anchor="middle" font-weight="bold" font-family="Liberation Sans">1500</text><text x="495.32" y="5.2" font-size="5.3" fill="#d0d0d0" text-anchor="middle" font-weight="bold" font-family="Liberation Sans">1600</text><text x="521.59" y="5.2" font-size="5.3" fill="#d0d0d0" text-anchor="middle" font-weight="bold" font-family="Liberation Sans">1700</text><text x="547.86" y="5.2" font-size="5.3" fill="#d0d0d0" text-anchor="middle" font-weight="bold" font-family="Liberation Sans">1800</text><text x="574.13" y="5.2" font-size="5.3" fill="#d0d0d0" text-anchor="middle" font-weight="bold" font-family="Liberation Sans">1900</text><text x="600.40" y="5.2" font-size="5.3" fill="#d0d0d0" text-anchor="middle" font-weight="bold" font-family="Liberation Sans">2000</text><text x="1.8" y="7.2" font-size="5.2" fill="#b0b0b0" font-family="Liberation Sans">px</text></svg>
<svg class="a" style="left:20px;top:65px" width="11" height="362"><rect x="7.7" y="1.71" width="2.1" height="0.8" fill="#b8b8b8"/><rect x="7.7" y="4.34" width="2.1" height="0.8" fill="#b8b8b8"/><rect x="7" y="6.96" width="2.8" height="0.8" fill="#c0c0c0"/><rect x="7.7" y="9.59" width="2.1" height="0.8" fill="#b8b8b8"/><rect x="7.7" y="12.22" width="2.1" height="0.8" fill="#b8b8b8"/><rect x="7.7" y="14.85" width="2.1" height="0.8" fill="#b8b8b8"/><rect x="7.7" y="17.47" width="2.1" height="0.8" fill="#b8b8b8"/><rect x="6" y="20.05" width="3.8" height="0.9" fill="#d0d0d0"/><rect x="7.7" y="22.73" width="2.1" height="0.8" fill="#b8b8b8"/><rect x="7.7" y="25.35" width="2.1" height="0.8" fill="#b8b8b8"/><rect x="7.7" y="27.98" width="2.1" height="0.8" fill="#b8b8b8"/><rect x="7.7" y="30.61" width="2.1" height="0.8" fill="#b8b8b8"/><rect x="7" y="33.24" width="2.8" height="0.8" fill="#c0c0c0"/><rect x="7.7" y="35.86" width="2.1" height="0.8" fill="#b8b8b8"/><rect x="7.7" y="38.49" width="2.1" height="0.8" fill="#b8b8b8"/><rect x="7.7" y="41.12" width="2.1" height="0.8" fill="#b8b8b8"/><rect x="7.7" y="43.74" width="2.1" height="0.8" fill="#b8b8b8"/><rect x="6" y="46.32" width="3.8" height="0.9" fill="#d0d0d0"/><rect x="7.7" y="49.00" width="2.1" height="0.8" fill="#b8b8b8"/><rect x="7.7" y="51.62" width="2.1" height="0.8" fill="#b8b8b8"/><rect x="7.7" y="54.25" width="2.1" height="0.8" fill="#b8b8b8"/><rect x="7.7" y="56.88" width="2.1" height="0.8" fill="#b8b8b8"/><rect x="7" y="59.51" width="2.8" height="0.8" fill="#c0c0c0"/><rect x="7.7" y="62.13" width="2.1" height="0.8" fill="#b8b8b8"/><rect x="7.7" y="64.76" width="2.1" height="0.8" fill="#b8b8b8"/><rect x="7.7" y="67.39" width="2.1" height="0.8" fill="#b8b8b8"/><rect x="7.7" y="70.01" width="2.1" height="0.8" fill="#b8b8b8"/><rect x="6" y="72.59" width="3.8" height="0.9" fill="#d0d0d0"/><rect x="7.7" y="75.27" width="2.1" height="0.8" fill="#b8b8b8"/><rect x="7.7" y="77.89" width="2.1" height="0.8" fill="#b8b8b8"/><rect x="7.7" y="80.52" width="2.1" height="0.8" fill="#b8b8b8"/><rect x="7.7" y="83.15" width="2.1" height="0.8" fill="#b8b8b8"/><rect x="7" y="85.78" width="2.8" height="0.8" fill="#c0c0c0"/><rect x="7.7" y="88.40" width="2.1" height="0.8" fill="#b8b8b8"/><rect x="7.7" y="91.03" width="2.1" height="0.8" fill="#b8b8b8"/><rect x="7.7" y="93.66" width="2.1" height="0.8" fill="#b8b8b8"/><rect x="7.7" y="96.28" width="2.1" height="0.8" fill="#b8b8b8"/><rect x="6" y="98.86" width="3.8" height="0.9" fill="#d0d0d0"/><rect x="7.7" y="101.54" width="2.1" height="0.8" fill="#b8b8b8"/><rect x="7.7" y="104.16" width="2.1" height="0.8" fill="#b8b8b8"/><rect x="7.7" y="106.79" width="2.1" height="0.8" fill="#b8b8b8"/><rect x="7.7" y="109.42" width="2.1" height="0.8" fill="#b8b8b8"/><rect x="7" y="112.04" width="2.8" height="0.8" fill="#c0c0c0"/><rect x="7.7" y="114.67" width="2.1" height="0.8" fill="#b8b8b8"/><rect x="7.7" y="117.30" width="2.1" height="0.8" fill="#b8b8b8"/><rect x="7.7" y="119.93" width="2.1" height="0.8" fill="#b8b8b8"/><rect x="7.7" y="122.55" width="2.1" height="0.8" fill="#b8b8b8"/><rect x="6" y="125.13" width="3.8" height="0.9" fill="#d0d0d0"/><rect x="7.7" y="127.81" width="2.1" height="0.8" fill="#b8b8b8"/><rect x="7.7" y="130.43" width="2.1" height="0.8" fill="#b8b8b8"/><rect x="7.7" y="133.06" width="2.1" height="0.8" fill="#b8b8b8"/><rect x="7.7" y="135.69" width="2.1" height="0.8" fill="#b8b8b8"/><rect x="7" y="138.31" width="2.8" height="0.8" fill="#c0c0c0"/><rect x="7.7" y="140.94" width="2.1" height="0.8" fill="#b8b8b8"/><rect x="7.7" y="143.57" width="2.1" height="0.8" fill="#b8b8b8"/><rect x="7.7" y="146.20" width="2.1" height="0.8" fill="#b8b8b8"/><rect x="7.7" y="148.82" width="2.1" height="0.8" fill="#b8b8b8"/><rect x="6" y="151.40" width="3.8" height="0.9" fill="#d0d0d0"/><rect x="7.7" y="154.08" width="2.1" height="0.8" fill="#b8b8b8"/><rect x="7.7" y="156.70" width="2.1" height="0.8" fill="#b8b8b8"/><rect x="7.7" y="159.33" width="2.1" height="0.8" fill="#b8b8b8"/><rect x="7.7" y="161.96" width="2.1" height="0.8" fill="#b8b8b8"/><rect x="7" y="164.58" width="2.8" height="0.8" fill="#c0c0c0"/><rect x="7.7" y="167.21" width="2.1" height="0.8" fill="#b8b8b8"/><rect x="7.7" y="169.84" width="2.1" height="0.8" fill="#b8b8b8"/><rect x="7.7" y="172.47" width="2.1" height="0.8" fill="#b8b8b8"/><rect x="7.7" y="175.09" width="2.1" height="0.8" fill="#b8b8b8"/><rect x="6" y="177.67" width="3.8" height="0.9" fill="#d0d0d0"/><rect x="7.7" y="180.35" width="2.1" height="0.8" fill="#b8b8b8"/><rect x="7.7" y="182.97" width="2.1" height="0.8" fill="#b8b8b8"/><rect x="7.7" y="185.60" width="2.1" height="0.8" fill="#b8b8b8"/><rect x="7.7" y="188.23" width="2.1" height="0.8" fill="#b8b8b8"/><rect x="7" y="190.85" width="2.8" height="0.8" fill="#c0c0c0"/><rect x="7.7" y="193.48" width="2.1" height="0.8" fill="#b8b8b8"/><rect x="7.7" y="196.11" width="2.1" height="0.8" fill="#b8b8b8"/><rect x="7.7" y="198.74" width="2.1" height="0.8" fill="#b8b8b8"/><rect x="7.7" y="201.36" width="2.1" height="0.8" fill="#b8b8b8"/><rect x="6" y="203.94" width="3.8" height="0.9" fill="#d0d0d0"/><rect x="7.7" y="206.62" width="2.1" height="0.8" fill="#b8b8b8"/><rect x="7.7" y="209.24" width="2.1" height="0.8" fill="#b8b8b8"/><rect x="7.7" y="211.87" width="2.1" height="0.8" fill="#b8b8b8"/><rect x="7.7" y="214.50" width="2.1" height="0.8" fill="#b8b8b8"/><rect x="7" y="217.12" width="2.8" height="0.8" fill="#c0c0c0"/><rect x="7.7" y="219.75" width="2.1" height="0.8" fill="#b8b8b8"/><rect x="7.7" y="222.38" width="2.1" height="0.8" fill="#b8b8b8"/><rect x="7.7" y="225.01" width="2.1" height="0.8" fill="#b8b8b8"/><rect x="7.7" y="227.63" width="2.1" height="0.8" fill="#b8b8b8"/><rect x="6" y="230.21" width="3.8" height="0.9" fill="#d0d0d0"/><rect x="7.7" y="232.89" width="2.1" height="0.8" fill="#b8b8b8"/><rect x="7.7" y="235.51" width="2.1" height="0.8" fill="#b8b8b8"/><rect x="7.7" y="238.14" width="2.1" height="0.8" fill="#b8b8b8"/><rect x="7.7" y="240.77" width="2.1" height="0.8" fill="#b8b8b8"/><rect x="7" y="243.39" width="2.8" height="0.8" fill="#c0c0c0"/><rect x="7.7" y="246.02" width="2.1" height="0.8" fill="#b8b8b8"/><rect x="7.7" y="248.65" width="2.1" height="0.8" fill="#b8b8b8"/><rect x="7.7" y="251.28" width="2.1" height="0.8" fill="#b8b8b8"/><rect x="7.7" y="253.90" width="2.1" height="0.8" fill="#b8b8b8"/><rect x="6" y="256.48" width="3.8" height="0.9" fill="#d0d0d0"/><rect x="7.7" y="259.16" width="2.1" height="0.8" fill="#b8b8b8"/><rect x="7.7" y="261.78" width="2.1" height="0.8" fill="#b8b8b8"/><rect x="7.7" y="264.41" width="2.1" height="0.8" fill="#b8b8b8"/><rect x="7.7" y="267.04" width="2.1" height="0.8" fill="#b8b8b8"/><rect x="7" y="269.67" width="2.8" height="0.8" fill="#c0c0c0"/><rect x="7.7" y="272.29" width="2.1" height="0.8" fill="#b8b8b8"/><rect x="7.7" y="274.92" width="2.1" height="0.8" fill="#b8b8b8"/><rect x="7.7" y="277.55" width="2.1" height="0.8" fill="#b8b8b8"/><rect x="7.7" y="280.17" width="2.1" height="0.8" fill="#b8b8b8"/><rect x="6" y="282.75" width="3.8" height="0.9" fill="#d0d0d0"/><rect x="7.7" y="285.43" width="2.1" height="0.8" fill="#b8b8b8"/><rect x="7.7" y="288.05" width="2.1" height="0.8" fill="#b8b8b8"/><rect x="7.7" y="290.68" width="2.1" height="0.8" fill="#b8b8b8"/><rect x="7.7" y="293.31" width="2.1" height="0.8" fill="#b8b8b8"/><rect x="7" y="295.94" width="2.8" height="0.8" fill="#c0c0c0"/><rect x="7.7" y="298.56" width="2.1" height="0.8" fill="#b8b8b8"/><rect x="7.7" y="301.19" width="2.1" height="0.8" fill="#b8b8b8"/><rect x="7.7" y="303.82" width="2.1" height="0.8" fill="#b8b8b8"/><rect x="7.7" y="306.44" width="2.1" height="0.8" fill="#b8b8b8"/><rect x="6" y="309.02" width="3.8" height="0.9" fill="#d0d0d0"/><rect x="7.7" y="311.70" width="2.1" height="0.8" fill="#b8b8b8"/><rect x="7.7" y="314.32" width="2.1" height="0.8" fill="#b8b8b8"/><rect x="7.7" y="316.95" width="2.1" height="0.8" fill="#b8b8b8"/><rect x="7.7" y="319.58" width="2.1" height="0.8" fill="#b8b8b8"/><rect x="7" y="322.20" width="2.8" height="0.8" fill="#c0c0c0"/><rect x="7.7" y="324.83" width="2.1" height="0.8" fill="#b8b8b8"/><rect x="7.7" y="327.46" width="2.1" height="0.8" fill="#b8b8b8"/><rect x="7.7" y="330.09" width="2.1" height="0.8" fill="#b8b8b8"/><rect x="7.7" y="332.71" width="2.1" height="0.8" fill="#b8b8b8"/><rect x="6" y="335.29" width="3.8" height="0.9" fill="#d0d0d0"/><rect x="7.7" y="337.97" width="2.1" height="0.8" fill="#b8b8b8"/><rect x="7.7" y="340.59" width="2.1" height="0.8" fill="#b8b8b8"/><rect x="7.7" y="343.22" width="2.1" height="0.8" fill="#b8b8b8"/><rect x="7.7" y="345.85" width="2.1" height="0.8" fill="#b8b8b8"/><rect x="7" y="348.48" width="2.8" height="0.8" fill="#c0c0c0"/><rect x="7.7" y="351.10" width="2.1" height="0.8" fill="#b8b8b8"/><rect x="7.7" y="353.73" width="2.1" height="0.8" fill="#b8b8b8"/><rect x="7.7" y="356.36" width="2.1" height="0.8" fill="#b8b8b8"/><rect x="7.7" y="358.98" width="2.1" height="0.8" fill="#b8b8b8"/><text x="0" y="0" font-size="5.3" fill="#d0d0d0" text-anchor="middle" font-weight="bold" font-family="Liberation Sans" transform="translate(4.6 20.50) rotate(-90)">0</text><text x="0" y="0" font-size="5.3" fill="#d0d0d0" text-anchor="middle" font-weight="bold" font-family="Liberation Sans" transform="translate(4.6 46.77) rotate(-90)">100</text><text x="0" y="0" font-size="5.3" fill="#d0d0d0" text-anchor="middle" font-weight="bold" font-family="Liberation Sans" transform="translate(4.6 73.04) rotate(-90)">200</text><text x="0" y="0" font-size="5.3" fill="#d0d0d0" text-anchor="middle" font-weight="bold" font-family="Liberation Sans" transform="translate(4.6 99.31) rotate(-90)">300</text><text x="0" y="0" font-size="5.3" fill="#d0d0d0" text-anchor="middle" font-weight="bold" font-family="Liberation Sans" transform="translate(4.6 125.58) rotate(-90)">400</text><text x="0" y="0" font-size="5.3" fill="#d0d0d0" text-anchor="middle" font-weight="bold" font-family="Liberation Sans" transform="translate(4.6 151.85) rotate(-90)">500</text><text x="0" y="0" font-size="5.3" fill="#d0d0d0" text-anchor="middle" font-weight="bold" font-family="Liberation Sans" transform="translate(4.6 178.12) rotate(-90)">600</text><text x="0" y="0" font-size="5.3" fill="#d0d0d0" text-anchor="middle" font-weight="bold" font-family="Liberation Sans" transform="translate(4.6 204.39) rotate(-90)">700</text><text x="0" y="0" font-size="5.3" fill="#d0d0d0" text-anchor="middle" font-weight="bold" font-family="Liberation Sans" transform="translate(4.6 230.66) rotate(-90)">800</text><text x="0" y="0" font-size="5.3" fill="#d0d0d0" text-anchor="middle" font-weight="bold" font-family="Liberation Sans" transform="translate(4.6 256.93) rotate(-90)">900</text><text x="0" y="0" font-size="5.3" fill="#d0d0d0" text-anchor="middle" font-weight="bold" font-family="Liberation Sans" transform="translate(4.6 283.20) rotate(-90)">1000</text><text x="0" y="0" font-size="5.3" fill="#d0d0d0" text-anchor="middle" font-weight="bold" font-family="Liberation Sans" transform="translate(4.6 309.47) rotate(-90)">1100</text><text x="0" y="0" font-size="5.3" fill="#d0d0d0" text-anchor="middle" font-weight="bold" font-family="Liberation Sans" transform="translate(4.6 335.74) rotate(-90)">1200</text><text x="0" y="0" font-size="5.3" fill="#d0d0d0" text-anchor="middle" font-weight="bold" font-family="Liberation Sans" transform="translate(4.6 362.01) rotate(-90)">1300</text><rect x="0" y="38.30" width="10" height="1.2" fill="#9a9a9a"/><rect x="10.2" y="0" width="0.8" height="362" fill="#282828"/></svg>
<svg class="a" style="left:0;top:0" width="20" height="437"><path d="M7.6 53.6 L7.6 60.6 L9.4 58.9 L10.8 61.4 L12 60.8 L10.8 58.3 L13.2 58.1 Z" fill="#2a2a2a" stroke="#d8d8d8" stroke-width="0.8" stroke-linejoin="round"/><rect x="5.8" y="67.2" width="8.8" height="9.4" fill="#17394f" /><rect x="6.6" y="68" width="7.2" height="7.8" fill="#5a9cc8"/><path d="M7.4 70.2 H13 M7.4 72 H13 M7.4 73.8 H13" stroke="#a8d0e8" stroke-width="0.7"/><path d="M7.4 83.6 L7.4 89.8 L9 88.4 L12.6 88.2 Z" fill="#f2f2f2"/><path d="M14.2 91.8 L15.8 90.2 L15.8 91.8Z" fill="#777"/><circle cx="9.6" cy="100.2" r="4.2" fill="#5a6678" stroke="#9aa6b8" stroke-width="0.8"/><circle cx="9.6" cy="100.2" r="2.4" fill="#2e3440" stroke="#9aa6b8" stroke-width="0.7"/><circle cx="9.6" cy="100.2" r="0.8" fill="#ccc"/><path d="M10 99.8 L13.6 96.2" stroke="#d86a8a" stroke-width="0.9"/><path d="M7.2 119 V115.2 Q7.4 112.6 10.6 112.6 H12" fill="none" stroke="#e8e8e8" stroke-width="1.5"/><path d="M11.6 110.8 L14.2 112.6 L11.6 114.4Z" fill="#e8e8e8"/><path d="M6.4 133.8 L7.6 128.6 L11 125.8 L13.4 128.2 L10.6 131.6 Z" fill="#e8b040" stroke="#6a4a10" stroke-width="0.5"/><path d="M6.4 133.8 L9 131.2" stroke="#5a3a10" stroke-width="0.5"/><rect x="11.2" y="124.8" width="2.6" height="2" fill="#ddd" transform="rotate(45 12.5 125.8)"/><path d="M6.4 146.2 L12.8 139.8" stroke="#3f86d0" stroke-width="2.4" stroke-linecap="butt"/><path d="M5.8 147 L6.6 145 L7.8 146.2Z" fill="#e0c090"/><path d="M9 147.6 Q11 146.6 13.6 147.8" stroke="#8a8a8a" stroke-width="0.6" fill="none"/><rect x="12.4" y="139" width="2" height="1.6" fill="#e86060" transform="rotate(45 13.4 139.8)"/><path d="M8.4 158.6 L13.6 153.4" stroke="#c88a4a" stroke-width="1.8"/><path d="M6.2 160.8 L8.8 158.2" stroke="#3a2a1a" stroke-width="2.2"/><path d="M5.2 162.2 Q9 161 14 162.6" stroke="#4a8ac8" stroke-width="0.9" fill="none"/><rect x="3.8" y="166.6" width="12.6" height="12.8" rx="1.5" fill="#1e1e1e"/><path d="M9.8 173.6 L9.80 169.20 A4.4 4.4 0 0 1 12.91 170.49Z" fill="#ff3a3a"/><path d="M9.8 173.6 L12.91 170.49 A4.4 4.4 0 0 1 14.20 173.60Z" fill="#ffb030"/><path d="M9.8 173.6 L14.20 173.60 A4.4 4.4 0 0 1 12.91 176.71Z" fill="#f0f040"/><path d="M9.8 173.6 L12.91 176.71 A4.4 4.4 0 0 1 9.80 178.00Z" fill="#40d040"/><path d="M9.8 173.6 L9.80 178.00 A4.4 4.4 0 0 1 6.69 176.71Z" fill="#30c0c0"/><path d="M9.8 173.6 L6.69 176.71 A4.4 4.4 0 0 1 5.40 173.60Z" fill="#3a6af0"/><path d="M9.8 173.6 L5.40 173.60 A4.4 4.4 0 0 1 6.69 170.49Z" fill="#a040e0"/><path d="M9.8 173.6 L6.69 170.49 A4.4 4.4 0 0 1 9.80 169.20Z" fill="#f040b0"/><circle cx="9.8" cy="173.6" r="2" fill="#888" opacity="0.7"/><circle cx="14.6" cy="168.6" r="1" fill="#ddd"/><path d="M7.8 182.6 H11.8 V186.4 Q11.8 188.6 9.8 188.6 Q7.8 188.6 7.8 186.4Z" fill="#f0f0f0"/><path d="M9.8 188.4 V191.2 M8 191.6 H11.6" stroke="#e8e8e8" stroke-width="0.9"/><rect x="5.2" y="198.2" width="9.4" height="7.6" fill="#c8c8c8"/><rect x="6" y="199" width="7.8" height="6" fill="#1e3a5e"/><path d="M6 203.6 Q8 201.2 10 202.8 Q12 204 13.8 202.2 V205 H6Z" fill="#7ab0e0"/><path d="M7.2 211.4 V219.4 H13.2 M5.8 213 H11.6 V221" fill="none" stroke="#d8d8d8" stroke-width="0.9"/><path d="M7.6 213.4 L11.2 219" stroke="#d8d8d8" stroke-width="0.6"/><rect x="5.8" y="227.5" width="8.4" height="7.6" fill="#4a9ee0"/><circle cx="10" cy="245.6" r="4" fill="#4a9ee0"/><rect x="5.8" y="256.2" width="8.4" height="7.6" rx="2" fill="#4a9ee0"/><path d="M9.8 278.2 L6 274.2 Q4.8 272.6 5.8 270.8 Q7.6 268.6 9.8 270.8 Q12 268.6 13.8 270.8 Q14.8 272.6 13.6 274.2 Z" fill="#4a9ee0"/><path d="M14.4 279.8 L16 278.2 V279.8Z" fill="#777"/><path d="M5.6 293 H7.6 M12 293 H14.2 M6.6 293 L9.9 286.6 L13.2 293 M8 290.8 H11.8" fill="none" stroke="#e8e8e8" stroke-width="1"/><path d="M14.6 294.8 L16.2 293.2 V294.8Z" fill="#777"/><path d="M6.6 306.2 L10.6 302.2" stroke="#f0f0f0" stroke-width="1.1" stroke-linecap="round"/><path d="M10.2 302.6 L12.8 300" stroke="#d8a840" stroke-width="2.4" stroke-linecap="round"/><path d="M7.2 321.6 Q5.6 318.6 5.6 316.8 Q6 315.6 7.2 317 L7.6 317.6 V313.6 Q8.2 312.6 8.9 313.6 V316.4 V312.8 Q9.6 312 10.3 312.8 V316.4 V313.4 Q11 312.6 11.7 313.4 V316.8 V314.8 Q12.4 314 13.1 314.8 V318.6 Q13 321.4 11.6 322.4 H8.6Z" fill="#f0b888" stroke="#a86a40" stroke-width="0.4"/><circle cx="9.3" cy="331" r="3.6" fill="#a8d0f0" stroke="#dfeefa" stroke-width="0.9"/><path d="M11.8 333.6 L14.2 336" stroke="#d87a60" stroke-width="1.4" stroke-linecap="round"/></svg>
<div class="t" style="left:88.60px;top:46.85px;font-size:5.96px;color:#7c7c7c;font-weight:bold;transform:scaleX(0.773);transform-origin:0 0">Jasmine purple gradient [M]</div>
<div class="t" style="left:304.00px;top:46.55px;font-size:5.96px;color:#858585;font-weight:bold;transform:scaleX(0.771);transform-origin:0 0">Hot Pink [M]</div>
<div class="t" style="left:461.10px;top:46.85px;font-size:5.96px;color:#cccccc;font-weight:bold;transform:scaleX(0.782);transform-origin:0 0">Use The Fill Tool to change Gradient direction [M]</div>
<div class="t" style="left:10.00px;top:429.80px;font-size:6.40px;color:#b8b8b8;font-weight:bold;transform:scaleX(0.804);transform-origin:0 0"><b style="color:#f2f2f2">Click</b> an object to select it. <b style="color:#f2f2f2">Drag</b> handles to change the selection’s fill.</div>
<div class="t" style="left:151.2px;top:108.92px;font-size:17.8px;color:#1c1c1c;text-shadow:none;transform:scaleX(0.9865);transform-origin:0 0">Use the <span style="background:linear-gradient(90deg,#6a3c14 0%,#8a5424 30%,#b07838 60%,#d29a48 85%,#dca850 100%);-webkit-background-clip:text;background-clip:text;color:transparent">Fill Tool [G]</span> to change gradient direction</div>
<svg class="a" style="left:0;top:0" width="794" height="437" viewBox="0 0 794 437"><defs><linearGradient id="g1" gradientUnits="userSpaceOnUse" x1="171.8" y1="0" x2="262.6" y2="0"><stop offset="0" stop-color="#84541a"/><stop offset="0.2" stop-color="#d89e34"/><stop offset="0.36" stop-color="#ae7626"/><stop offset="0.53" stop-color="#94601e"/><stop offset="0.62" stop-color="#a8701f"/><stop offset="0.77" stop-color="#eeb036"/><stop offset="1" stop-color="#94601e"/></linearGradient><linearGradient id="g2" gradientUnits="userSpaceOnUse" x1="0" y1="171.7" x2="0" y2="236.29999999999998"><stop offset="0" stop-color="#a06c22"/><stop offset="0.2" stop-color="#dba038"/><stop offset="0.53" stop-color="#9a6220"/><stop offset="0.77" stop-color="#e6aa36"/><stop offset="1" stop-color="#94601e"/></linearGradient><linearGradient id="g3" gradientUnits="userSpaceOnUse" x1="427.9" y1="159.5" x2="481" y2="247.7"><stop offset="0" stop-color="#8a5a1a"/><stop offset="0.29" stop-color="#dca035"/><stop offset="0.45" stop-color="#9a6220"/><stop offset="0.61" stop-color="#e8ac35"/><stop offset="0.8" stop-color="#9a6020"/><stop offset="1" stop-color="#8a5818"/></linearGradient><linearGradient id="g4" gradientUnits="userSpaceOnUse" x1="171.8" y1="0" x2="262.6" y2="0"><stop offset="0" stop-color="#80521a"/><stop offset="0.15" stop-color="#8e5c1e"/><stop offset="0.4" stop-color="#ae7828"/><stop offset="0.73" stop-color="#dca438"/><stop offset="1" stop-color="#cc9635"/></linearGradient><linearGradient id="g5" gradientUnits="userSpaceOnUse" x1="0" y1="264.0" x2="0" y2="328.6"><stop offset="0" stop-color="#dca235"/><stop offset="0.2" stop-color="#c48a30"/><stop offset="0.5" stop-color="#a87024"/><stop offset="1" stop-color="#9a6420"/></linearGradient><linearGradient id="g6" gradientUnits="userSpaceOnUse" x1="399" y1="255" x2="509.4" y2="395.2"><stop offset="0" stop-color="#a87028"/><stop offset="0.1" stop-color="#bc8430"/><stop offset="0.2" stop-color="#d59d38"/><stop offset="0.35" stop-color="#b07828"/><stop offset="0.55" stop-color="#9a6420"/><stop offset="1" stop-color="#8a5818"/></linearGradient></defs><path d="M217.20,180.73C211.45,173.18 203.52,170.20 193.61,170.20C180.72,170.20 171.80,179.14 171.80,190.08C171.80,207.97 191.63,221.88 217.20,234.80C242.77,221.88 262.60,207.97 262.60,190.08C262.60,179.14 253.68,170.20 240.79,170.20C230.88,170.20 222.95,173.18 217.20,180.73Z" fill="url(#g1)" stroke="#744812" stroke-width="0.7"/><path d="M335.70,182.23C329.95,174.68 322.02,171.70 312.11,171.70C299.22,171.70 290.30,180.64 290.30,191.58C290.30,209.47 310.13,223.38 335.70,236.30C361.27,223.38 381.10,209.47 381.10,191.58C381.10,180.64 372.18,171.70 359.29,171.70C349.38,171.70 341.45,174.68 335.70,182.23Z" fill="url(#g2)" stroke="#744812" stroke-width="0.7"/><path d="M454.50,182.43C448.75,174.88 440.82,171.90 430.91,171.90C418.02,171.90 409.10,180.84 409.10,191.78C409.10,209.67 428.93,223.58 454.50,236.50C480.07,223.58 499.90,209.67 499.90,191.78C499.90,180.84 490.98,171.90 478.09,171.90C468.18,171.90 460.25,174.88 454.50,182.43Z" fill="url(#g3)" stroke="#744812" stroke-width="0.7"/><path d="M217.20,274.33C211.45,266.78 203.52,263.80 193.61,263.80C180.72,263.80 171.80,272.74 171.80,283.68C171.80,301.57 191.63,315.48 217.20,328.40C242.77,315.48 262.60,301.57 262.60,283.68C262.60,272.74 253.68,263.80 240.79,263.80C230.88,263.80 222.95,266.78 217.20,274.33Z" fill="url(#g4)" stroke="#744812" stroke-width="0.7"/><path d="M335.70,274.53C329.95,266.98 322.02,264.00 312.11,264.00C299.22,264.00 290.30,272.94 290.30,283.88C290.30,301.77 310.13,315.68 335.70,328.60C361.27,315.68 381.10,301.77 381.10,283.88C381.10,272.94 372.18,264.00 359.29,264.00C349.38,264.00 341.45,266.98 335.70,274.53Z" fill="url(#g5)" stroke="#744812" stroke-width="0.7"/><path d="M454.40,273.33C448.65,265.78 440.72,262.80 430.81,262.80C417.92,262.80 409.00,271.74 409.00,282.68C409.00,300.57 428.83,314.48 454.40,327.40C479.97,314.48 499.80,300.57 499.80,282.68C499.80,271.74 490.88,262.80 477.99,262.80C468.08,262.80 460.15,265.78 454.40,273.33Z" fill="url(#g6)" stroke="#6a6470" stroke-width="0.7"/><line x1="399.1" y1="254.5" x2="509.6" y2="395.0" stroke="#e2e4ea" stroke-width="3" stroke-opacity="0.92"/><line x1="406.76" y1="260.52" x2="403.15" y2="263.37" stroke="#d4d8e2" stroke-width="1.8" stroke-opacity="0.9"/><line x1="417.81" y1="274.57" x2="414.20" y2="277.42" stroke="#d4d8e2" stroke-width="1.8" stroke-opacity="0.9"/><line x1="429.09" y1="288.91" x2="425.47" y2="291.75" stroke="#d4d8e2" stroke-width="1.8" stroke-opacity="0.9"/><line x1="441.13" y1="304.22" x2="437.51" y2="307.06" stroke="#d4d8e2" stroke-width="1.8" stroke-opacity="0.9"/><line x1="453.78" y1="320.31" x2="450.17" y2="323.15" stroke="#d4d8e2" stroke-width="1.8" stroke-opacity="0.9"/><line x1="467.21" y1="337.38" x2="463.59" y2="340.22" stroke="#d4d8e2" stroke-width="1.8" stroke-opacity="0.9"/><line x1="479.03" y1="352.41" x2="475.42" y2="355.26" stroke="#d4d8e2" stroke-width="1.8" stroke-opacity="0.9"/><line x1="491.52" y1="368.29" x2="487.90" y2="371.13" stroke="#d4d8e2" stroke-width="1.8" stroke-opacity="0.9"/><line x1="504.23" y1="384.45" x2="500.61" y2="387.29" stroke="#d4d8e2" stroke-width="1.8" stroke-opacity="0.9"/><line x1="399.1" y1="254.5" x2="509.6" y2="395.0" stroke="#7898cc" stroke-width="0.8"/><line x1="406.61" y1="260.65" x2="403.31" y2="263.24" stroke="#7898cc" stroke-width="0.7"/><line x1="417.66" y1="274.70" x2="414.36" y2="277.29" stroke="#7898cc" stroke-width="0.7"/><line x1="428.93" y1="289.03" x2="425.63" y2="291.63" stroke="#7898cc" stroke-width="0.7"/><line x1="440.97" y1="304.34" x2="437.67" y2="306.94" stroke="#7898cc" stroke-width="0.7"/><line x1="453.62" y1="320.43" x2="450.32" y2="323.03" stroke="#7898cc" stroke-width="0.7"/><line x1="467.05" y1="337.50" x2="463.75" y2="340.10" stroke="#7898cc" stroke-width="0.7"/><line x1="478.87" y1="352.54" x2="475.57" y2="355.13" stroke="#7898cc" stroke-width="0.7"/><line x1="491.36" y1="368.41" x2="488.06" y2="371.01" stroke="#7898cc" stroke-width="0.7"/><line x1="504.07" y1="384.57" x2="500.77" y2="387.17" stroke="#7898cc" stroke-width="0.7"/><circle cx="420.43" cy="281.62" r="1.8" fill="#c8ccd8" stroke="#6a7aa6" stroke-width="0.75"/><circle cx="433.91" cy="298.76" r="1.8" fill="#c8ccd8" stroke="#6a7aa6" stroke-width="0.75"/><circle cx="444.07" cy="311.68" r="1.8" fill="#c8ccd8" stroke="#6a7aa6" stroke-width="0.75"/><circle cx="496.34" cy="378.14" r="1.8" fill="#c8a8b0" stroke="#6a7aa6" stroke-width="0.75"/><circle cx="399.10" cy="254.50" r="1.25" fill="#2a2850"/><circle cx="410.70" cy="269.25" r="1.25" fill="#2e3060"/><circle cx="459.65" cy="331.49" r="1.25" fill="#2e3060"/><circle cx="471.70" cy="346.81" r="1.25" fill="#5a4a70"/><circle cx="485.29" cy="364.09" r="1.25" fill="#a89868"/><circle cx="509.6" cy="395.0" r="2.7" fill="#5a5e72" stroke="#d6deee" stroke-width="1.2"/></svg>
</body></html>
